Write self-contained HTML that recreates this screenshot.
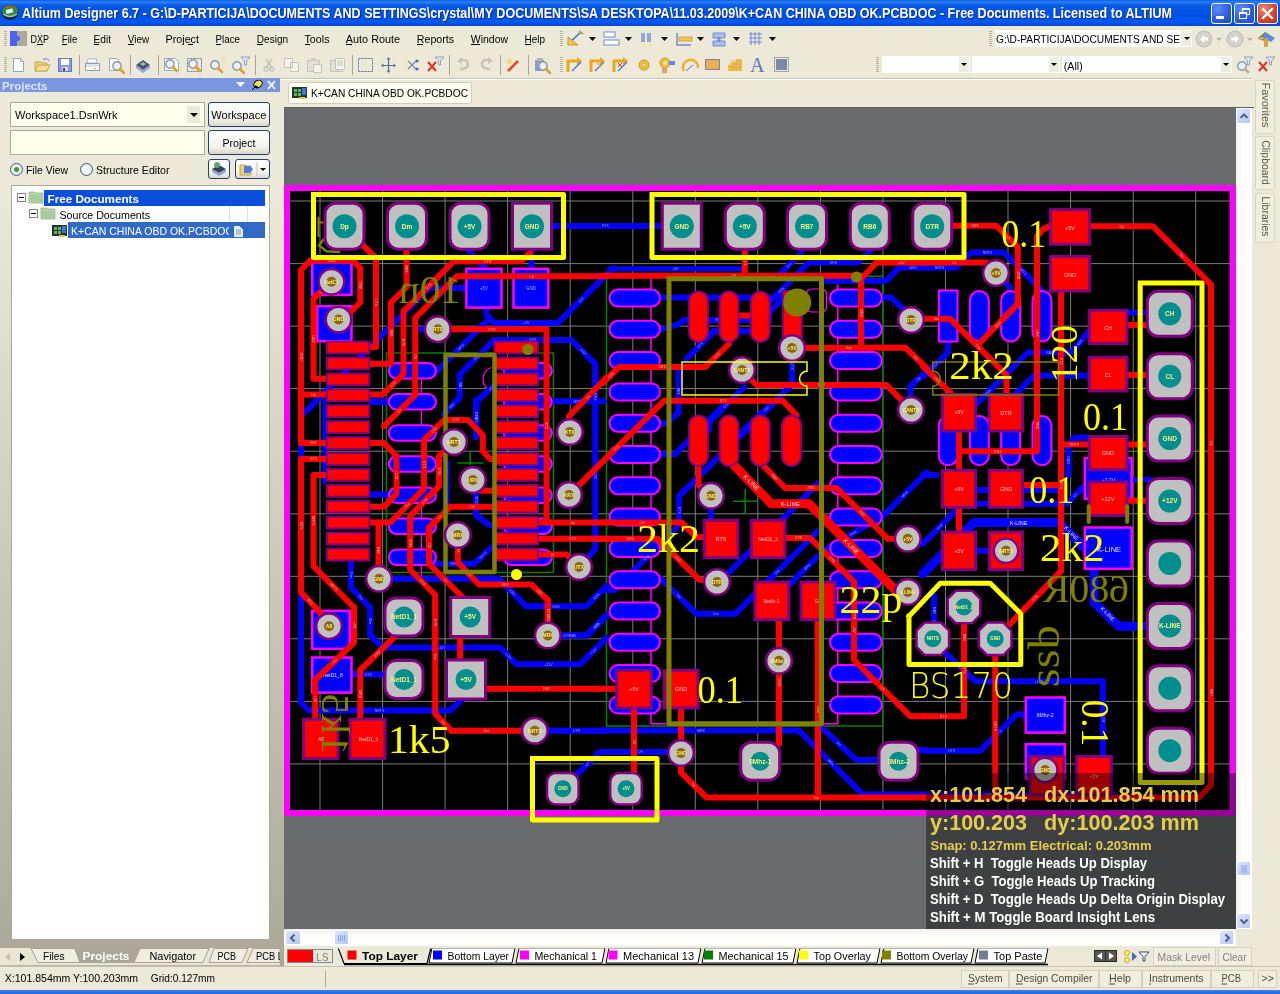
<!DOCTYPE html>
<html lang="en">
<head>
<meta charset="utf-8">
<title>Altium Designer 6.7</title>
<style>
*{box-sizing:border-box;margin:0;padding:0}
html,body{width:1280px;height:994px;overflow:hidden;background:#ECE9D8}
body{font-family:"Liberation Sans","DejaVu Sans",sans-serif;font-size:12px;color:#000;position:relative;-webkit-font-smoothing:none}
.abs{position:absolute}
#title{left:0;top:0;width:1280px;height:26px;background:linear-gradient(#0A5FE0 0,#2B80F8 2px,#0B5CE8 5px,#0355E4 9px,#0150E6 16px,#0259F3 22px,#0144D0 26px)}
#title .txt{left:22px;top:4px;color:#fff;font-weight:bold;font-size:13.5px;white-space:nowrap;letter-spacing:.42px;text-shadow:1px 1px 0 #0A246A}
.wbtn{top:3px;width:21px;height:21px;border:1px solid #fff;border-radius:3px;background:radial-gradient(circle at 30% 25%,#5C8CF5,#2A5BDD 60%,#1E49C8)}
.wbtn.close{background:radial-gradient(circle at 30% 25%,#E9886E,#D1432A 60%,#B8301A)}
#menubar{left:0;top:26px;width:1280px;height:26px;background:#ECE9D8}
.mi{top:33px;font-size:11.5px;white-space:nowrap;line-height:13px}
.mi u{text-decoration:underline;text-underline-offset:1px}
#toolbar{left:0;top:52px;width:1280px;height:26px;background:#ECE9D8}
.grip{width:3px;height:16px;background:repeating-linear-gradient(#B6B29E 0,#B6B29E 1px,transparent 1px,transparent 2px)}
.sep{width:1px;height:20px;background:#A9A592;top:55px}
.arrow{width:0;height:0;border-left:3px solid transparent;border-right:3px solid transparent;border-top:3px solid #000}
.combo{background:#fff;height:17px;top:56px}
.combo .cb{position:absolute;right:1px;top:1px;width:10px;height:15px;background:#EEECE0}
.combo .cb:after{content:"";position:absolute;left:2px;top:6px;border-left:3px solid transparent;border-right:3px solid transparent;border-top:3px solid #000}
#phead{left:0;top:78px;width:280px;height:14px;background:#7A96DF}
#phead .t{left:2px;top:0;font-weight:bold;font-size:11.5px;color:#DDE4F8;line-height:14px;letter-spacing:.3px}
.xpbtn{border:1px solid #1D3F7B;border-radius:3px;background:linear-gradient(#fff,#F3F2EA 70%,#DAD6C8);font-size:11.5px;text-align:center}
.inp{border:1px solid #ABA899;background:#FFFFEE}
#tree{left:11px;top:185px;width:259px;height:755px;background:#fff;border:1px solid #ABA899;border-width:1px 1px 1px 1px}
#work{left:284px;top:108px;width:952px;height:821px;background:#6A6B6E;overflow:hidden}
.sb{background:linear-gradient(90deg,#F3F1EC,#FDFDFB 40%,#FFFFFF)}
.sbb{width:16px;height:16px;border:1px solid #fff;border-radius:2px;background:linear-gradient(135deg,#DCE6FC,#B4C8F6);box-shadow:0 0 0 0 #000}
.sbh{background:linear-gradient(#F3F1EC,#FDFDFB 40%,#FFFFFF)}
.vtab{left:1255px;width:20px;border:1px solid #D8D5C4;background:#F1EEE0;border-radius:2px}
.vtab span{position:absolute;left:50%;top:50%;transform:translate(-50%,-50%) rotate(90deg);white-space:nowrap;font-size:11.5px;color:#5A5849}
.ltab{top:947px;height:19px;font-size:11.5px;line-height:18px;white-space:nowrap}
.sq{position:absolute;width:10px;height:10px;border:1px solid #000;top:3px}
.stb{top:970px;height:18px;border:1px solid #D4D0C0;background:#F1EEE0;font-size:11.5px;text-align:center;line-height:16px;color:#4A4A3A}
</style>
</head>
<body>
<!-- ===== Title bar ===== -->
<div id="title" class="abs">
  <svg class="abs" style="left:1px;top:3px" width="18" height="18" viewBox="0 0 18 18"><ellipse cx="9" cy="9.5" rx="8.5" ry="7.5" fill="#1B2A28"/><ellipse cx="9" cy="8" rx="8" ry="6" fill="#2F8A3A"/><path d="M2 6 Q9 0 16 6 Q9 3 2 6Z" fill="#D9432A"/><rect x="5" y="6" width="7" height="4" fill="#E8F0E0" transform="rotate(-15 9 8)"/><path d="M2 11 Q9 16 16 11" stroke="#9FC8F0" stroke-width="1.5" fill="none"/></svg>
  <div class="abs wbtn" style="left:1211px"><div class="abs" style="left:4px;top:12px;width:8px;height:3px;background:#fff"></div></div>
  <div class="abs wbtn" style="left:1234px"><div class="abs" style="left:7px;top:4px;width:8px;height:7px;border:1px solid #fff;border-top-width:2px"></div><div class="abs" style="left:4px;top:8px;width:8px;height:7px;border:1px solid #fff;border-top-width:2px;background:#2E60DE"></div></div>
  <div class="abs wbtn close" style="left:1257px"><svg width="19" height="19" viewBox="0 0 19 19"><path d="M5 5L14 14M14 5L5 14" stroke="#fff" stroke-width="2.2" stroke-linecap="square"/></svg></div>
</div>

<!-- ===== Menu bar ===== -->
<div id="menubar" class="abs"></div>
<div class="abs grip" style="left:4px;top:31px"></div>
<div class="abs" style="left:10px;top:31px;width:7px;height:15px;background:#4A62F0"></div>
<div class="abs" style="left:17px;top:31px;width:10px;height:15px;background:#ABA89A"></div>
<div class="abs" style="left:15px;top:36px;width:5px;height:5px;border-radius:3px;background:#4A62F0"></div>
<div class="abs grip" style="left:560px;top:31px"></div>
<!-- menu-row tool icons -->
<svg class="abs" style="left:566px;top:29px" width="210" height="20" viewBox="0 0 210 20">
  <path d="M2 15L15 3" stroke="#3A6CD0" stroke-width="1.6"/><path d="M2 8L2 16L12 16Z" fill="#F4C84E" stroke="#B08A20" stroke-width=".8"/><path d="M13 2L17 5" stroke="#C9A040" stroke-width="2"/>
  <path d="M23 8h7l-3.5 4z" fill="#000"/>
  <rect x="38" y="3" width="11" height="5" fill="#fff" stroke="#6C8CD8"/><rect x="38" y="11" width="15" height="5" fill="#fff" stroke="#6C8CD8"/>
  <path d="M59 8h7l-3.5 4z" fill="#000"/>
  <path d="M75 4h4v9h-4zM81 4h4v9h-4z" fill="#8FA6DD"/><path d="M76 16l2-2 2 2-2 2zM82 16l2-2 2 2-2 2z" fill="#F6E3A0"/>
  <path d="M95 8h7l-3.5 4z" fill="#000"/>
  <path d="M111 4v12h14" stroke="#6C8CD8" stroke-width="1.5" fill="none"/><rect x="113" y="8" width="13" height="4" fill="#F4C84E" stroke="#B08A20" stroke-width=".6"/>
  <path d="M131 8h7l-3.5 4z" fill="#000"/>
  <path d="M147 4h12v5h-7v3h7v5h-12v-5h7V9h-7z" fill="#A9C0F0" stroke="#5C7CC8" stroke-width=".8"/>
  <path d="M167 8h7l-3.5 4z" fill="#000"/>
  <path d="M183 5h13M183 9h13M183 13h13M185 3v13M189 3v13M193 3v13" stroke="#6C8CD8" stroke-width="1"/>
  <path d="M203 8h7l-3.5 4z" fill="#000"/>
</svg>
<div class="abs grip" style="left:989px;top:31px"></div>
<div class="abs" style="left:995px;top:30px;width:197px;height:17px;background:#fff"></div>
<div class="abs" style="left:1181px;top:31px;width:10px;height:15px;background:#EEECE0"></div>
<div class="abs arrow" style="left:1184px;top:37px"></div>
<svg class="abs" style="left:1194px;top:29px" width="86" height="20" viewBox="0 0 86 20">
  <circle cx="10" cy="10" r="8" fill="#D4D2CA" stroke="#BEBCB2"/><path d="M6 10l4-4v2.5h4v3h-4V14z" fill="#fff"/>
  <path d="M22 9h6l-3 3z" fill="#B8B6AC"/>
  <circle cx="41" cy="10" r="8" fill="#D4D2CA" stroke="#BEBCB2"/><path d="M45 10l-4-4v2.5h-4v3h4V14z" fill="#fff"/>
  <path d="M53 9h6l-3 3z" fill="#B8B6AC"/>
  <path d="M63 10l8-7 5 3z" fill="#7A8A3A"/><path d="M71 3l10 6-4 4-8-4z" fill="#5A8CE0"/><rect x="70" y="9" width="4" height="9" fill="#D9A441"/><path d="M64 10l6 2 1-3z" fill="#C08A30"/>
</svg>
<!-- ===== Toolbar ===== -->
<div id="toolbar" class="abs"></div>
<div class="abs grip" style="left:4px;top:57px"></div>
<div class="abs sep" style="left:79px"></div><div class="abs sep" style="left:130px"></div><div class="abs sep" style="left:158px"></div>
<div class="abs sep" style="left:255px"></div><div class="abs sep" style="left:352px"></div><div class="abs sep" style="left:449px"></div>
<div class="abs sep" style="left:500px"></div><div class="abs sep" style="left:528px"></div>
<div class="abs grip" style="left:560px;top:57px"></div>
<svg class="abs" style="left:0;top:52px" width="800" height="26" viewBox="0 0 800 26">
 <!-- new -->
 <path d="M13.5 6.500h7l3 3v10h-10z" fill="#fff" stroke="#8FA0C0"/><path d="M20.500 6.500v3h3" fill="#DCE4F0" stroke="#8FA0C0" stroke-width=".8"/>
 <!-- open -->
 <path d="M35 10h6l1 1h5v8H35z" fill="#E9D28A" stroke="#B89A40" stroke-width=".8"/><path d="M35 19l3-6h12l-3 6z" fill="#F6DE8C" stroke="#B89A40" stroke-width=".8"/><path d="M43 8q4-3 6 1" stroke="#7C9CD8" fill="none" stroke-width="1.2"/>
 <!-- save -->
 <rect x="58.500" y="6.500" width="13" height="13" fill="#8C9CE0" stroke="#6478C0"/><rect x="61" y="7" width="8" height="6" fill="#fff"/><rect x="62" y="15" width="6" height="4" fill="#D8DCF0"/><rect x="63" y="16" width="2" height="3" fill="#445"/>
 <!-- print -->
 <path d="M88 7h9l-1 4h-9z" fill="#fff" stroke="#9AA8C0" stroke-width=".8"/><path d="M85.500 11.500h14v7h-14z" fill="#DCE4F2" stroke="#8C9CB8"/><rect x="86" y="15" width="13" height="3" fill="#fff"/><rect x="94" y="16" width="2" height="1" fill="#E0A030"/>
 <!-- preview -->
 <path d="M109.500 6.500h7l3 3v9h-10z" fill="#fff" stroke="#9AA8C0"/><g transform="translate(117 14)"><circle cx="0" cy="0" r="4.2" fill="#E8F0FA" stroke="#8C98A8" stroke-width="1.4"/><path d="M3 3l4 4" stroke="#E0A030" stroke-width="2.6" stroke-linecap="round"/></g>
 <!-- layers chip -->
 <path d="M136 13l7-5 7 5-7 5z" fill="#485468"/><path d="M136 13v3l7 5 7-5v-3l-7 5z" fill="#8CA4D8"/><path d="M140 12l3-2 3 2-3 2z" fill="#A8B4C8"/>
 <!-- zoom doc -->
 <path d="M164.500 6.500h11l3 3v9h-14z" fill="#fff" stroke="#9AA8C0"/><g transform="translate(170 12)"><circle cx="0" cy="0" r="4.2" fill="#E8F0FA" stroke="#8C98A8" stroke-width="1.4"/><path d="M3 3l4 4" stroke="#E0A030" stroke-width="2.6" stroke-linecap="round"/></g>
 <!-- zoom area -->
 <rect x="187.500" y="6.500" width="14" height="13" fill="none" stroke="#6C7890" stroke-dasharray="2 1"/><g transform="translate(193 12)"><circle cx="0" cy="0" r="4.2" fill="#E8F0FA" stroke="#8C98A8" stroke-width="1.4"/><path d="M3 3l4 4" stroke="#E0A030" stroke-width="2.6" stroke-linecap="round"/></g>
 <!-- zoom selected -->
 <g transform="translate(215 13)"><circle cx="0" cy="0" r="4.2" fill="#E8F0FA" stroke="#8C98A8" stroke-width="1.4"/><path d="M3 3l4 4" stroke="#E0A030" stroke-width="2.6" stroke-linecap="round"/></g><path d="M224 5l2 2-2 2-2-2zM224 11l2 2-2 2-2-2z" fill="#FFF6D0" stroke="#E8C860" stroke-width=".6"/>
 <!-- zoom filter -->
 <g transform="translate(237 14)"><circle cx="0" cy="0" r="4.2" fill="#E8F0FA" stroke="#8C98A8" stroke-width="1.4"/><path d="M3 3l4 4" stroke="#E0A030" stroke-width="2.6" stroke-linecap="round"/></g><g transform="translate(241 5)"><path d="M0 0h9l-3.5 4v4h-2v-4z" fill="#DDE8F6" stroke="#7C90B0" stroke-width=".8"/></g>
 <!-- cut/copy/paste (disabled) -->
 <path d="M266 7l6 9M272 7l-6 9" stroke="#C6C4B8" stroke-width="1.6"/><circle cx="266" cy="17" r="2" fill="none" stroke="#C6C4B8" stroke-width="1.4"/><circle cx="272" cy="17" r="2" fill="none" stroke="#C6C4B8" stroke-width="1.4"/>
 <path d="M284.500 6.500h8v9h-8zM290.500 10.500h8v9h-8z" fill="#F4F3EC" stroke="#C6C4B8"/>
 <path d="M307.500 8.500h12v11h-12z" fill="#E2E0D6" stroke="#C6C4B8"/><path d="M313.500 12.500h8v8h-8z" fill="#F4F3EC" stroke="#C6C4B8"/><rect x="311" y="6" width="5" height="3" fill="#D0CEC2"/>
 <path d="M330.500 8.500h12v11h-12z" fill="#E2E0D6" stroke="#C6C4B8"/><path d="M335.500 6.500h9v11h-9z" fill="#F4F3EC" stroke="#C6C4B8"/><path d="M337 9h6M337 11h6M337 13h6" stroke="#C6C4B8"/>
 <!-- select rect -->
 <rect x="358.500" y="6.500" width="14" height="13" fill="none" stroke="#5C6CA8" stroke-dasharray="2 1"/>
 <!-- move -->
 <path d="M388.500 6v14M382 13.500h13" stroke="#5C6C98" stroke-width="1.2"/><path d="M388.500 5l2 2.500h-4zM388.500 21l2-2.500h-4zM381 13.500l2.500-2v4zM396 13.500l-2.500-2v4z" fill="#5C6C98"/>
 <!-- deselect -->
 <path d="M408 9l8 8M416 9l-8 8" stroke="#7C8CB0" stroke-width="1.2"/><circle cx="417" cy="9" r="1.600" fill="#5C6CA8"/><circle cx="417" cy="17" r="1.600" fill="#5C6CA8"/><path d="M406 7l2 2-2 2-2-2zM406 15l2 2-2 2-2-2z" fill="#FFF6D0" stroke="#E8C860" stroke-width=".6"/>
 <!-- x filter -->
 <path d="M428 10l8 9M436 10l-8 9" stroke="#E03020" stroke-width="2"/><g transform="translate(435 5)"><path d="M0 0h9l-3.5 4v4h-2v-4z" fill="#DDE8F6" stroke="#7C90B0" stroke-width=".8"/></g>
 <!-- undo redo -->
 <path d="M460 17q8 0 8-5t-8-4" stroke="#C6C4B8" stroke-width="2.4" fill="none"/><path d="M457 9l5-4v7z" fill="#C6C4B8"/>
 <path d="M490 17q-8 0-8-5t8-4" stroke="#C6C4B8" stroke-width="2.400" fill="none"/><path d="M493 9l-5-4v7z" fill="#C6C4B8"/>
 <!-- wand -->
 <path d="M508 19l10-10" stroke="#E04830" stroke-width="2.6"/><path d="M509 6l1.500 2 2-1-1 2 2 1.500-2.500.5-.5 2.500-1.500-2-2 1 1-2-2-1.500 2.500-.5z" fill="#F4D870"/>
 <!-- find -->
 <rect x="535" y="8" width="9" height="11" fill="#8C9CD0"/><rect x="537" y="6" width="6" height="3" fill="#B8B4A4"/><g transform="translate(543 14)"><circle cx="0" cy="0" r="4.2" fill="#E8F0FA" stroke="#8C98A8" stroke-width="1.4"/><path d="M3 3l4 4" stroke="#E0A030" stroke-width="2.6" stroke-linecap="round"/></g>
 <!-- routing tools -->
 <g transform="translate(567 4)"><path d="M1 16V5h9" stroke="#E8A820" stroke-width="3" fill="none"/><path d="M10 1l5 4-5 4z" fill="#E8A820"/></g><path d="M572 19l9-9" stroke="#4C7CD8" stroke-width="1.5"/>
 <g transform="translate(590 4)"><path d="M1 16V5h9" stroke="#E8A820" stroke-width="3" fill="none"/><path d="M10 1l5 4-5 4z" fill="#E8A820"/></g><path d="M595 19l9-9" stroke="#4C7CD8" stroke-width="1.500"/><path d="M596 12h4v4" stroke="#E8A820" fill="none"/>
 <g transform="translate(613 4)"><path d="M1 16V5h9" stroke="#E8A820" stroke-width="3" fill="none"/><path d="M10 1l5 4-5 4z" fill="#E8A820"/></g><path d="M618 19l9-9" stroke="#4C7CD8" stroke-width="1.500"/><path d="M618 11l4 4M622 11l-4 4" stroke="#E04830"/>
 <circle cx="644" cy="13" r="5" fill="#F0C030" stroke="#C89820"/><circle cx="644" cy="13" r="1.800" fill="#ECE9D8" stroke="#C89820" stroke-width=".6"/>
 <circle cx="665" cy="11" r="5" fill="#F0C030" stroke="#C89820"/><circle cx="665" cy="11" r="1.800" fill="#ECE9D8"/><rect x="662" y="15" width="5" height="6" fill="#E8A060"/><rect x="669" y="9" width="6" height="4" fill="#5C8CE0"/>
 <path d="M684 19a7.500 7.500 0 1 1 14-3" stroke="#F0B030" stroke-width="2.400" fill="none"/><path d="M686 19l7-6" stroke="#4C7CD8"/>
 <rect x="705.500" y="7.500" width="14" height="10" fill="#E8B050" stroke="#8C7CA0"/>
 <path d="M728 19v-6h4v-3h4v-3h6v12z" fill="#F0C040"/><path d="M729 15h13M729 12h13M733 9h9M732 8v11M736 8v11M740 8v11" stroke="#D8A060" stroke-width=".6"/>
 <text x="750" y="20" font-family="Liberation Serif,serif" font-size="20" fill="#5C78B8">A</text>
 <rect x="776" y="7" width="11" height="11" fill="#7C88A8"/><rect x="774.500" y="5.500" width="14" height="14" fill="none" stroke="#4C5C80" stroke-dasharray="1 1"/>
</svg>
<div class="abs grip" style="left:876px;top:57px"></div>
<div class="abs combo" style="left:882px;width:88px"><div class="cb"></div></div>
<div class="abs combo" style="left:972px;width:88px"><div class="cb"></div></div>
<div class="abs combo" style="left:1062px;width:170px"><div class="cb"></div></div>
<svg class="abs" style="left:1234px;top:52px" width="46" height="26" viewBox="0 0 46 26">
  <circle cx="8" cy="14" r="4.200" fill="#E8F0FA" stroke="#8C98A8" stroke-width="1.400"/><path d="M11 17l3 3" stroke="#B0A890" stroke-width="2.400" stroke-linecap="round"/><path d="M10 5h9l-3.500 4v4h-2v-4z" fill="#DDE8F6" stroke="#7C90B0" stroke-width=".8"/>
  <path d="M25 10l8 9M33 10l-8 9" stroke="#E03020" stroke-width="2"/><path d="M32 5h9l-3.500 4v4h-2v-4z" fill="#DDE8F6" stroke="#7C90B0" stroke-width=".8"/>
</svg>
<div class="abs" style="left:0;top:78px;width:1252px;height:1px;background:#C5C2B2"></div>
<div class="abs" style="left:0;top:79px;width:1252px;height:1px;background:#fff"></div>
<!-- ===== Left panel ===== -->
<div class="abs" style="left:0;top:92px;width:284px;height:874px;background:linear-gradient(#ECE9D8 0,#ECE9D8 12%,#ACA899 100%)"></div>
<div id="phead" class="abs">
  <svg class="abs" style="left:234px;top:0" width="46" height="14" viewBox="0 0 46 14"><path d="M2 4h9l-4.500 5z" fill="#fff"/><path d="M18 12l3-3" stroke="#000" stroke-width="1"/><ellipse cx="24" cy="6" rx="4.500" ry="3.500" fill="#F4E060" stroke="#000" transform="rotate(-35 24 6)"/><path d="M21 8l3 2" stroke="#000" stroke-width="2"/><path d="M34 3l7 8M41 3l-7 8" stroke="#fff" stroke-width="1.800"/></svg>
</div>
<div class="abs inp" style="left:10px;top:102px;width:195px;height:25px"></div>
<div class="abs" style="left:187px;top:106px;width:13px;height:17px;background:#ECE9D8"></div>
<div class="abs arrow" style="left:190px;top:113px;border-left-width:4px;border-right-width:4px;border-top-width:4px"></div>
<div class="abs xpbtn" style="left:208px;top:102px;width:62px;height:25px;line-height:22px"></div>
<div class="abs inp" style="left:10px;top:130px;width:195px;height:25px"></div>
<div class="abs xpbtn" style="left:208px;top:130px;width:62px;height:25px;line-height:22px"></div>
<div class="abs" style="left:10px;top:163px;width:13px;height:13px;border:1px solid #3A5A8A;border-radius:7px;background:radial-gradient(#fff,#E4E2D8)"></div>
<div class="abs" style="left:14px;top:167px;width:5px;height:5px;border-radius:3px;background:#2EA52E"></div>
<div class="abs" style="left:80px;top:163px;width:13px;height:13px;border:1px solid #3A5A8A;border-radius:7px;background:radial-gradient(#fff,#E4E2D8)"></div>
<div class="abs xpbtn" style="left:208px;top:159px;width:22px;height:20px"><svg width="20" height="18" viewBox="0 0 20 18"><path d="M3 9l7-4 7 4-7 4z" fill="#384050"/><path d="M3 9v3l7 4 7-4V9l-7 4z" fill="#8CA4D8"/><circle cx="8" cy="5" r="3" fill="#5CA870"/></svg></div>
<div class="abs xpbtn" style="left:235px;top:159px;width:35px;height:20px"><svg width="33" height="18" viewBox="0 0 33 18"><path d="M4 5h5l1 1h5v9H4z" fill="#F0D070" stroke="#B89A40" stroke-width=".8"/><path d="M8 6h6l3 3-3 4H8z" fill="#4C7CE0"/><path d="M21 2v14" stroke="#C8C4B4"/><path d="M24 8h6l-3 3z" fill="#000"/></svg></div>
<div id="tree" class="abs"></div>
<!-- tree rows -->
<div class="abs" style="left:44px;top:190px;width:221px;height:16px;background:#0A4FDC"></div>
<div class="abs" style="left:229px;top:206px;width:1px;height:16px;background:#E0E0E0"></div><div class="abs" style="left:247px;top:206px;width:1px;height:16px;background:#E0E0E0"></div>
<div class="abs" style="left:68px;top:222px;width:197px;height:16px;background:#316AC5"></div>
<svg class="abs" style="left:12px;top:186px" width="256" height="54" viewBox="0 0 256 54">
  <rect x="5.500" y="7.500" width="8" height="8" fill="#fff" stroke="#848484"/><path d="M7 11.500h5" stroke="#000"/>
  <path d="M17 6h5l1 1h8v10H17z" fill="#B8D8A8" stroke="#8CA884" stroke-width=".8"/><path d="M17 9h14v8H17z" fill="#A8CC9C"/>
  <rect x="17.500" y="23.500" width="8" height="8" fill="#fff" stroke="#848484"/><path d="M19 27.500h5" stroke="#000"/>
  <path d="M29 22h5l1 1h8v10H29z" fill="#B8D8A8" stroke="#8CA884" stroke-width=".8"/><path d="M29 25h14v8H29z" fill="#A8CC9C"/>
  <rect x="40" y="39" width="15" height="11" fill="#203828"/><path d="M42 41h3v3h-3zM46 41h3v3h-3zM42 45h3v3h-3zM46 45h3v3h-3z" fill="#58B868"/><rect x="50" y="40" width="4" height="7" fill="#3C78D0"/><rect x="47" y="49" width="6" height="2" fill="#E8C840"/>
  <path d="M222.500 40.500h5l3 3v7h-8z" fill="#E8EEF8" stroke="#fff" stroke-width=".8"/><path d="M224 44h5M224 46h5M224 48h5" stroke="#6C84B0" stroke-width=".8"/>
</svg>
<!-- panel bottom tabs -->
<svg class="abs" style="left:0;top:946px" width="284" height="20" viewBox="0 0 284 20">
  <rect x="0" y="2" width="280" height="18" fill="#E9E6D5"/>
  <path d="M10 7l-5 4 5 4z" fill="#C4C0B0"/><path d="M20 7l5 4-5 4z" fill="#000"/>
  <path d="M31 2.500h44l5 14h-42z" fill="#EFEDE0" stroke="#A5A28F" stroke-width="1"/>
  <path d="M140 2.500h69l-6 14h-69z" fill="#EFEDE0" stroke="#A5A28F" stroke-width="1"/>
  <path d="M214 2.500h34l-6 14h-33z" fill="#EFEDE0" stroke="#A5A28F" stroke-width="1"/>
  <path d="M253 2.500h27v14h-33z" fill="#EFEDE0" stroke="#A5A28F" stroke-width="1"/>
  <path d="M74 2h66l-6 15h-54z" fill="#ACA899"/>
  <path d="M0 19.500h284" stroke="#B8B5A2"/>
</svg>
<div class="abs" style="left:280px;top:80px;width:4px;height:886px;background:linear-gradient(#ECE9D8 0,#ECE9D8 12%,#ACA899 100%)"></div>

<!-- ===== Document tab ===== -->
<div class="abs" style="left:288px;top:82px;width:184px;height:22px;border:1px solid #D0CDB8;border-radius:3px;background:#FDFDF0"></div>
<svg class="abs" style="left:292px;top:86px" width="17" height="14" viewBox="0 0 17 14"><rect x="0" y="1" width="15" height="11" fill="#203828"/><path d="M2 3h3v3h-3zM6 3h3v3h-3zM2 7h3v3h-3zM6 7h3v3h-3z" fill="#58B868"/><rect x="10" y="2" width="4" height="7" fill="#3C78D0"/><rect x="7" y="11" width="6" height="2" fill="#E8C840"/></svg>
<div class="abs" style="left:284px;top:107px;width:970px;height:1px;background:#5C5D60"></div>
<svg class="abs" style="left:284px;top:108px;will-change:transform" width="952" height="821" viewBox="284 108 952 821" font-family="Liberation Sans,sans-serif">
<rect x="284" y="108" width="952" height="821" fill="#6A6B6E"/>
<g id="L-grid">
<rect x="287" y="188" width="945.5" height="625" fill="#000" stroke="#FF00FF" stroke-width="6" stroke-linejoin="round"/>
<path d="M320.0 190V810M382.6 190V810M445.1 190V810M507.6 190V810M570.2 190V810M632.8 190V810M695.3 190V810M757.8 190V810M820.4 190V810M882.9 190V810M945.5 190V810M1008.0 190V810M1070.6 190V810M1133.2 190V810M1195.7 190V810M290 201.0H1230M290 263.6H1230M290 326.1H1230M290 388.6H1230M290 451.2H1230M290 513.8H1230M290 576.3H1230M290 638.8H1230M290 701.4H1230M290 763.9H1230" stroke="#7C7C7C" stroke-width="1" fill="none"/>
</g>
<g id="L-mech">
<polyline points="386.5,353 553.5,353 553.5,572.5 386.5,572.5 386.5,353" fill="none" stroke="#008000" stroke-width="1.6" stroke-linecap="square" stroke-linejoin="round"/>
<polyline points="421.5,379.5 421.5,393.2" fill="none" stroke="#FF00FF" stroke-width="1.2" stroke-linecap="round" stroke-linejoin="round"/>
<polyline points="421.5,410.6 421.5,424.4" fill="none" stroke="#FF00FF" stroke-width="1.2" stroke-linecap="round" stroke-linejoin="round"/>
<polyline points="421.5,441.7 421.5,455.4" fill="none" stroke="#FF00FF" stroke-width="1.2" stroke-linecap="round" stroke-linejoin="round"/>
<polyline points="421.5,472.8 421.5,486.6" fill="none" stroke="#FF00FF" stroke-width="1.2" stroke-linecap="round" stroke-linejoin="round"/>
<polyline points="421.5,503.9 421.5,517.6" fill="none" stroke="#FF00FF" stroke-width="1.2" stroke-linecap="round" stroke-linejoin="round"/>
<polyline points="421.5,535 421.5,548.8" fill="none" stroke="#FF00FF" stroke-width="1.2" stroke-linecap="round" stroke-linejoin="round"/>
<polyline points="421.5,566.1 421.5,579.9" fill="none" stroke="#FF00FF" stroke-width="1.2" stroke-linecap="round" stroke-linejoin="round"/>
<path d="M491.5 367.5A10 12 0 0 0 491.5 391.2" fill="none" stroke="#FF00FF" stroke-width="1.2"/>
<polyline points="606.5,278.8 606.5,726 882.8,726" fill="none" stroke="#008000" stroke-width="1.6" stroke-linecap="round" stroke-linejoin="round"/>
<polyline points="864,276.2 882.8,276.2 882.8,726" fill="none" stroke="#008000" stroke-width="1.6" stroke-linecap="round" stroke-linejoin="round"/>
<polyline points="651,278.8 651,723.8 666.5,723.8" fill="none" stroke="#FF00FF" stroke-width="1.5" stroke-linecap="round" stroke-linejoin="round"/>
<polyline points="837.8,285 837.8,723.8 824,723.8" fill="none" stroke="#FF00FF" stroke-width="1.5" stroke-linecap="round" stroke-linejoin="round"/>
<rect x="806.5" y="289.0" width="20" height="23" rx="5" fill="none" stroke="#FF00FF" stroke-width="1.2"/>
<polyline points="457.8,463 482.8,463" fill="none" stroke="#008000" stroke-width="1.6" stroke-linecap="round" stroke-linejoin="round"/>
<polyline points="470.2,451.2 470.2,464.5" fill="none" stroke="#008000" stroke-width="1.6" stroke-linecap="round" stroke-linejoin="round"/>
<polyline points="733.5,501.2 757,501.2" fill="none" stroke="#008000" stroke-width="1.6" stroke-linecap="round" stroke-linejoin="round"/>
<polyline points="745.2,489.5 745.2,513.8" fill="none" stroke="#008000" stroke-width="1.6" stroke-linecap="round" stroke-linejoin="round"/>
</g>
<g id="L-blue">
<polyline points="469,251.2 484,266.2" fill="none" stroke="#0000FF" stroke-width="6" stroke-linecap="round" stroke-linejoin="round"/>
<polyline points="531.5,251.2 531.5,267.5" fill="none" stroke="#0000FF" stroke-width="6" stroke-linecap="round" stroke-linejoin="round"/>
<polyline points="551.5,226 659,226" fill="none" stroke="#0000FF" stroke-width="6" stroke-linecap="round" stroke-linejoin="round"/>
<polyline points="465.2,288 429,288 301,416.2 301,702.5" fill="none" stroke="#0000FF" stroke-width="6" stroke-linecap="round" stroke-linejoin="round"/>
<polyline points="486.5,308.8 486.5,315 494.5,323 557.8,323 604,277" fill="none" stroke="#0000FF" stroke-width="6" stroke-linecap="round" stroke-linejoin="round"/>
<polyline points="487.8,320 434,373.8" fill="none" stroke="#0000FF" stroke-width="6" stroke-linecap="round" stroke-linejoin="round"/>
<polyline points="421.5,329.2 431.5,329.2" fill="none" stroke="#0000FF" stroke-width="6" stroke-linecap="round" stroke-linejoin="round"/>
<polyline points="494,340 571.5,340 595.2,363.8 595.2,430" fill="none" stroke="#0000FF" stroke-width="6" stroke-linecap="round" stroke-linejoin="round"/>
<polyline points="494,340 459.8,374.5 459.8,397.5 444,413.8" fill="none" stroke="#0000FF" stroke-width="6" stroke-linecap="round" stroke-linejoin="round"/>
<polyline points="507.8,373.8 476.5,401.2 476.5,430" fill="none" stroke="#0000FF" stroke-width="6" stroke-linecap="round" stroke-linejoin="round"/>
<polyline points="552.8,401.2 604,401.2" fill="none" stroke="#0000FF" stroke-width="6" stroke-linecap="round" stroke-linejoin="round"/>
<polyline points="371.5,401.2 389,401.2" fill="none" stroke="#0000FF" stroke-width="6" stroke-linecap="round" stroke-linejoin="round"/>
<polyline points="609,268.8 741.5,268.8" fill="none" stroke="#0000FF" stroke-width="5" stroke-linecap="round" stroke-linejoin="round"/>
<polyline points="614,267.5 599,282.5" fill="none" stroke="#0000FF" stroke-width="5" stroke-linecap="round" stroke-linejoin="round"/>
<polyline points="801.5,252.5 776.5,277.5" fill="none" stroke="#0000FF" stroke-width="6" stroke-linecap="round" stroke-linejoin="round"/>
<polyline points="869.8,251.2 857.8,262.5 809,262.5 754,317.5" fill="none" stroke="#0000FF" stroke-width="6" stroke-linecap="round" stroke-linejoin="round"/>
<polyline points="661,297.5 784,297.5" fill="none" stroke="#0000FF" stroke-width="6" stroke-linecap="round" stroke-linejoin="round"/>
<polyline points="661,329.5 679,323.8 684,320 754,320" fill="none" stroke="#0000FF" stroke-width="6" stroke-linecap="round" stroke-linejoin="round"/>
<polyline points="714,331.2 754,331.2" fill="none" stroke="#0000FF" stroke-width="6" stroke-linecap="round" stroke-linejoin="round"/>
<polyline points="784,297.5 769,312.5 769,320" fill="none" stroke="#0000FF" stroke-width="6" stroke-linecap="round" stroke-linejoin="round"/>
<polyline points="792,352.5 792,380" fill="none" stroke="#0000FF" stroke-width="6" stroke-linecap="round" stroke-linejoin="round"/>
<polyline points="678.5,370 678.5,412.5 666.5,423.8 661,423.8" fill="none" stroke="#0000FF" stroke-width="6" stroke-linecap="round" stroke-linejoin="round"/>
<polyline points="744,387.5 709,422.5 709,430" fill="none" stroke="#0000FF" stroke-width="6" stroke-linecap="round" stroke-linejoin="round"/>
<polyline points="789,387.5 744,430" fill="none" stroke="#0000FF" stroke-width="6" stroke-linecap="round" stroke-linejoin="round"/>
<polyline points="882.8,297.5 891.5,297.5 904,310 911,320" fill="none" stroke="#0000FF" stroke-width="6" stroke-linecap="round" stroke-linejoin="round"/>
<polyline points="926.5,267.5 899,267.5 886.5,280.8 824,280.8" fill="none" stroke="#0000FF" stroke-width="6" stroke-linecap="round" stroke-linejoin="round"/>
<polyline points="926.5,371.2 910.2,386.2 910.2,400" fill="none" stroke="#0000FF" stroke-width="6" stroke-linecap="round" stroke-linejoin="round"/>
<polyline points="819,312.5 819,430" fill="none" stroke="#0000FF" stroke-width="1.5" stroke-linecap="round" stroke-linejoin="round"/>
<polyline points="714,331.2 686.5,358.8" fill="none" stroke="#0000FF" stroke-width="6" stroke-linecap="round" stroke-linejoin="round"/>
<polyline points="922.8,267.5 956.5,267.5 971,252.5 1004,252.5 1041.5,290" fill="none" stroke="#0000FF" stroke-width="6" stroke-linecap="round" stroke-linejoin="round"/>
<polyline points="996,273 1010.2,287.5" fill="none" stroke="#0000FF" stroke-width="6" stroke-linecap="round" stroke-linejoin="round"/>
<polyline points="1128.5,312.5 1146.5,312.5" fill="none" stroke="#0000FF" stroke-width="6" stroke-linecap="round" stroke-linejoin="round"/>
<polyline points="1087.8,332.5 1071.5,352.5 1027.8,352.5 949,431.2" fill="none" stroke="#0000FF" stroke-width="6" stroke-linecap="round" stroke-linejoin="round"/>
<polyline points="1087.8,375.5 1034,375.5 980.2,430" fill="none" stroke="#0000FF" stroke-width="6" stroke-linecap="round" stroke-linejoin="round"/>
<polyline points="947.8,342.5 947.8,352.5 924,376.2" fill="none" stroke="#0000FF" stroke-width="6" stroke-linecap="round" stroke-linejoin="round"/>
<polyline points="324.5,400 324.5,482.5" fill="none" stroke="#0000FF" stroke-width="4" stroke-linecap="round" stroke-linejoin="round"/>
<polyline points="370.2,494.5 389,494.5" fill="none" stroke="#0000FF" stroke-width="6" stroke-linecap="round" stroke-linejoin="round"/>
<polyline points="371.5,402 389,402" fill="none" stroke="#0000FF" stroke-width="6" stroke-linecap="round" stroke-linejoin="round"/>
<polyline points="351,562.5 351,587.5 370.2,607.5 370.2,635" fill="none" stroke="#0000FF" stroke-width="6" stroke-linecap="round" stroke-linejoin="round"/>
<polyline points="389,578.8 499,578.8 526,606.2 586.5,606.2 606.5,586.2" fill="none" stroke="#0000FF" stroke-width="6" stroke-linecap="round" stroke-linejoin="round"/>
<polyline points="476,400 476,437.5" fill="none" stroke="#0000FF" stroke-width="6" stroke-linecap="round" stroke-linejoin="round"/>
<polyline points="476,485 476,515 489,525 494,525" fill="none" stroke="#0000FF" stroke-width="6" stroke-linecap="round" stroke-linejoin="round"/>
<polyline points="491.5,547.5 474,563.8 436.5,563.8" fill="none" stroke="#0000FF" stroke-width="6" stroke-linecap="round" stroke-linejoin="round"/>
<polyline points="447.8,462.5 447.8,505" fill="none" stroke="#0000FF" stroke-width="4" stroke-linecap="round" stroke-linejoin="round"/>
<polyline points="595.2,400 595.2,548.8 587.8,557.5 579,567" fill="none" stroke="#0000FF" stroke-width="6" stroke-linecap="round" stroke-linejoin="round"/>
<polyline points="547.8,635.5 586.5,635 606.5,615" fill="none" stroke="#0000FF" stroke-width="6" stroke-linecap="round" stroke-linejoin="round"/>
<polyline points="724,405 675.2,454.2 661,454.2" fill="none" stroke="#0000FF" stroke-width="6" stroke-linecap="round" stroke-linejoin="round"/>
<polyline points="774,402.5 679,496.2 679,525 614,590 602.8,590" fill="none" stroke="#0000FF" stroke-width="6" stroke-linecap="round" stroke-linejoin="round"/>
<polyline points="711,505 711,518.8" fill="none" stroke="#0000FF" stroke-width="6" stroke-linecap="round" stroke-linejoin="round"/>
<polyline points="819,482.5 729,572.5 717,582" fill="none" stroke="#0000FF" stroke-width="6" stroke-linecap="round" stroke-linejoin="round"/>
<polyline points="926.5,472.5 882.8,516.2 824,550 790.2,583.8" fill="none" stroke="#0000FF" stroke-width="6" stroke-linecap="round" stroke-linejoin="round"/>
<polyline points="661,578.8 696.5,613.8 735.2,613.8 819,530" fill="none" stroke="#0000FF" stroke-width="6" stroke-linecap="round" stroke-linejoin="round"/>
<polyline points="922.8,475 936.5,475" fill="none" stroke="#0000FF" stroke-width="6" stroke-linecap="round" stroke-linejoin="round"/>
<polyline points="977,490 1059,490" fill="none" stroke="#0000FF" stroke-width="6" stroke-linecap="round" stroke-linejoin="round"/>
<polyline points="977,503.8 1066.5,503.8 1084,486.2" fill="none" stroke="#0000FF" stroke-width="6" stroke-linecap="round" stroke-linejoin="round"/>
<polyline points="1087.8,437.5 1075.2,437.5 1068.5,445 1068.5,475" fill="none" stroke="#0000FF" stroke-width="6" stroke-linecap="round" stroke-linejoin="round"/>
<polyline points="922.8,573.8 974,522.5 1059,522.5 1084,547.5" fill="none" stroke="#0000FF" stroke-width="9" stroke-linecap="round" stroke-linejoin="round"/>
<polyline points="1094,570 1094,602.5 1119,626.2 1146.5,626.2" fill="none" stroke="#0000FF" stroke-width="9" stroke-linecap="round" stroke-linejoin="round"/>
<polyline points="956.5,510 922.8,543.8" fill="none" stroke="#0000FF" stroke-width="6" stroke-linecap="round" stroke-linejoin="round"/>
<polyline points="977,550.8 987.8,550.8" fill="none" stroke="#0000FF" stroke-width="6" stroke-linecap="round" stroke-linejoin="round"/>
<polyline points="1132.8,479.5 1149,479.5" fill="none" stroke="#0000FF" stroke-width="6" stroke-linecap="round" stroke-linejoin="round"/>
<polyline points="934,595 934,650" fill="none" stroke="#0000FF" stroke-width="6" stroke-linecap="round" stroke-linejoin="round"/>
<text x="1018.5" y="525.2" font-size="5.5" fill="#E0E0FF" text-anchor="middle">K-LINE</text>
<text x="1071.5" y="535.2" font-size="5.5" fill="#E0E0FF" text-anchor="middle" transform="rotate(45 1071.5 533.2)">K-LINE</text>
<text x="1107.8" y="615.8" font-size="5.5" fill="#E0E0FF" text-anchor="middle" transform="rotate(45 1107.8 613.8)">K-LINE</text>
<polyline points="301,700 301,702.5 309,710.5 450.2,710.5 464,697.5" fill="none" stroke="#0000FF" stroke-width="6" stroke-linecap="round" stroke-linejoin="round"/>
<polyline points="370.2,635 382.8,647.5 500.2,647.5 516.5,664.2 580.2,664.2 606.5,638" fill="none" stroke="#0000FF" stroke-width="6" stroke-linecap="round" stroke-linejoin="round"/>
<polyline points="352.8,674.5 384,674.5" fill="none" stroke="#0000FF" stroke-width="6" stroke-linecap="round" stroke-linejoin="round"/>
<polyline points="559,635.8 586.5,635.8 606.5,616.2" fill="none" stroke="#0000FF" stroke-width="6" stroke-linecap="round" stroke-linejoin="round"/>
<polyline points="546.5,730.8 606.5,730.8" fill="none" stroke="#0000FF" stroke-width="6" stroke-linecap="round" stroke-linejoin="round"/>
<polyline points="575.2,776.2 599.5,752 681,752" fill="none" stroke="#0000FF" stroke-width="6" stroke-linecap="round" stroke-linejoin="round"/>
<polyline points="602.8,730.5 799,730.5 862.8,794.5 1114,794.5" fill="none" stroke="#0000FF" stroke-width="6" stroke-linecap="round" stroke-linejoin="round"/>
<polyline points="821.5,727.5 856.5,760 877.8,760" fill="none" stroke="#0000FF" stroke-width="6" stroke-linecap="round" stroke-linejoin="round"/>
<polyline points="919,750 926.5,750" fill="none" stroke="#0000FF" stroke-width="6" stroke-linecap="round" stroke-linejoin="round"/>
<polyline points="946.5,653.8 975.2,681.2 1102.8,681.2 1102.8,755" fill="none" stroke="#0000FF" stroke-width="6" stroke-linecap="round" stroke-linejoin="round"/>
<polyline points="922.8,750.8 980.2,750.8 1016.5,714.5 1024.5,714.5" fill="none" stroke="#0000FF" stroke-width="6" stroke-linecap="round" stroke-linejoin="round"/>
<polyline points="934,598.8 934,622.5" fill="none" stroke="#0000FF" stroke-width="6" stroke-linecap="round" stroke-linejoin="round"/>
</g>
<g id="L-bpad">
<rect x="312.2" y="262.4" width="39.3" height="32.5" fill="#0000FF" stroke="#FF00FF" stroke-width="2.5"/>
<rect x="317.2" y="306.2" width="34.3" height="35" fill="#0000FF" stroke="#FF00FF" stroke-width="2.5"/>
<rect x="466.4" y="268.8" width="35.1" height="38.8" fill="#0000FF" stroke="#FF00FF" stroke-width="2.5"/>
<rect x="513.5" y="268.8" width="34.8" height="38.8" fill="#0000FF" stroke="#FF00FF" stroke-width="2.5"/>
<text x="484" y="289.6" font-size="4.5" fill="#B0B0FF" text-anchor="middle">+5V</text>
<text x="531" y="289.6" font-size="4.5" fill="#B0B0FF" text-anchor="middle">GND</text>
<rect x="388.8" y="363" width="47.2" height="15.5" fill="#0000FF" stroke="#FF00FF" stroke-width="2" rx="7.8"/>
<rect x="503.8" y="363" width="48" height="15.5" fill="#0000FF" stroke="#FF00FF" stroke-width="2" rx="7.8"/>
<rect x="388.8" y="394.1" width="47.2" height="15.5" fill="#0000FF" stroke="#FF00FF" stroke-width="2" rx="7.8"/>
<rect x="503.8" y="394.1" width="48" height="15.5" fill="#0000FF" stroke="#FF00FF" stroke-width="2" rx="7.8"/>
<rect x="388.8" y="425.2" width="47.2" height="15.5" fill="#0000FF" stroke="#FF00FF" stroke-width="2" rx="7.8"/>
<rect x="503.8" y="425.2" width="48" height="15.5" fill="#0000FF" stroke="#FF00FF" stroke-width="2" rx="7.8"/>
<rect x="388.8" y="456.3" width="47.2" height="15.5" fill="#0000FF" stroke="#FF00FF" stroke-width="2" rx="7.8"/>
<rect x="503.8" y="456.3" width="48" height="15.5" fill="#0000FF" stroke="#FF00FF" stroke-width="2" rx="7.8"/>
<rect x="388.8" y="487.4" width="47.2" height="15.5" fill="#0000FF" stroke="#FF00FF" stroke-width="2" rx="7.8"/>
<rect x="503.8" y="487.4" width="48" height="15.5" fill="#0000FF" stroke="#FF00FF" stroke-width="2" rx="7.8"/>
<rect x="388.8" y="518.5" width="47.2" height="15.5" fill="#0000FF" stroke="#FF00FF" stroke-width="2" rx="7.8"/>
<rect x="503.8" y="518.5" width="48" height="15.5" fill="#0000FF" stroke="#FF00FF" stroke-width="2" rx="7.8"/>
<rect x="388.8" y="549.6" width="47.2" height="15.5" fill="#0000FF" stroke="#FF00FF" stroke-width="2" rx="7.8"/>
<rect x="503.8" y="549.6" width="48" height="15.5" fill="#0000FF" stroke="#FF00FF" stroke-width="2" rx="7.8"/>
<rect x="609.5" y="289.5" width="50.5" height="17" fill="#0000FF" stroke="#FF00FF" stroke-width="2" rx="8.5"/>
<rect x="830" y="289.5" width="51.8" height="17" fill="#0000FF" stroke="#FF00FF" stroke-width="2" rx="8.5"/>
<rect x="609.5" y="320.8" width="50.5" height="17" fill="#0000FF" stroke="#FF00FF" stroke-width="2" rx="8.5"/>
<rect x="830" y="320.8" width="51.8" height="17" fill="#0000FF" stroke="#FF00FF" stroke-width="2" rx="8.5"/>
<rect x="609.5" y="352.1" width="50.5" height="17" fill="#0000FF" stroke="#FF00FF" stroke-width="2" rx="8.5"/>
<rect x="830" y="352.1" width="51.8" height="17" fill="#0000FF" stroke="#FF00FF" stroke-width="2" rx="8.5"/>
<rect x="609.5" y="383.4" width="50.5" height="17" fill="#0000FF" stroke="#FF00FF" stroke-width="2" rx="8.5"/>
<rect x="830" y="383.4" width="51.8" height="17" fill="#0000FF" stroke="#FF00FF" stroke-width="2" rx="8.5"/>
<rect x="609.5" y="414.7" width="50.5" height="17" fill="#0000FF" stroke="#FF00FF" stroke-width="2" rx="8.5"/>
<rect x="830" y="414.7" width="51.8" height="17" fill="#0000FF" stroke="#FF00FF" stroke-width="2" rx="8.5"/>
<rect x="609.5" y="446" width="50.5" height="17" fill="#0000FF" stroke="#FF00FF" stroke-width="2" rx="8.5"/>
<rect x="830" y="446" width="51.8" height="17" fill="#0000FF" stroke="#FF00FF" stroke-width="2" rx="8.5"/>
<rect x="609.5" y="477.3" width="50.5" height="17" fill="#0000FF" stroke="#FF00FF" stroke-width="2" rx="8.5"/>
<rect x="830" y="477.3" width="51.8" height="17" fill="#0000FF" stroke="#FF00FF" stroke-width="2" rx="8.5"/>
<rect x="609.5" y="508.6" width="50.5" height="17" fill="#0000FF" stroke="#FF00FF" stroke-width="2" rx="8.5"/>
<rect x="830" y="508.6" width="51.8" height="17" fill="#0000FF" stroke="#FF00FF" stroke-width="2" rx="8.5"/>
<rect x="609.5" y="539.9" width="50.5" height="17" fill="#0000FF" stroke="#FF00FF" stroke-width="2" rx="8.5"/>
<rect x="830" y="539.9" width="51.8" height="17" fill="#0000FF" stroke="#FF00FF" stroke-width="2" rx="8.5"/>
<rect x="609.5" y="571.2" width="50.5" height="17" fill="#0000FF" stroke="#FF00FF" stroke-width="2" rx="8.5"/>
<rect x="830" y="571.2" width="51.8" height="17" fill="#0000FF" stroke="#FF00FF" stroke-width="2" rx="8.5"/>
<rect x="609.5" y="602.5" width="50.5" height="17" fill="#0000FF" stroke="#FF00FF" stroke-width="2" rx="8.5"/>
<rect x="830" y="602.5" width="51.8" height="17" fill="#0000FF" stroke="#FF00FF" stroke-width="2" rx="8.5"/>
<rect x="609.5" y="633.8" width="50.5" height="17" fill="#0000FF" stroke="#FF00FF" stroke-width="2" rx="8.5"/>
<rect x="830" y="633.8" width="51.8" height="17" fill="#0000FF" stroke="#FF00FF" stroke-width="2" rx="8.5"/>
<rect x="609.5" y="665.1" width="50.5" height="17" fill="#0000FF" stroke="#FF00FF" stroke-width="2" rx="8.5"/>
<rect x="830" y="665.1" width="51.8" height="17" fill="#0000FF" stroke="#FF00FF" stroke-width="2" rx="8.5"/>
<rect x="609.5" y="696.4" width="50.5" height="17" fill="#0000FF" stroke="#FF00FF" stroke-width="2" rx="8.5"/>
<rect x="830" y="696.4" width="51.8" height="17" fill="#0000FF" stroke="#FF00FF" stroke-width="2" rx="8.5"/>
<rect x="938.8" y="290.5" width="18.7" height="51" fill="#0000FF" stroke="#FF00FF" stroke-width="2"/>
<rect x="969.8" y="291" width="19" height="50.5" fill="#0000FF" stroke="#FF00FF" stroke-width="2" rx="9.5"/>
<rect x="1001.2" y="291" width="19" height="50.5" fill="#0000FF" stroke="#FF00FF" stroke-width="2" rx="9.5"/>
<rect x="1032.5" y="291" width="19" height="50.5" fill="#0000FF" stroke="#FF00FF" stroke-width="2" rx="9.5"/>
<rect x="312.2" y="610.8" width="37.5" height="38" fill="#0000FF" stroke="#FF00FF" stroke-width="2.5"/>
<rect x="938.8" y="416" width="18.7" height="49.2" fill="#0000FF" stroke="#FF00FF" stroke-width="2" rx="9"/>
<rect x="969.8" y="416" width="19" height="49.2" fill="#0000FF" stroke="#FF00FF" stroke-width="2" rx="9.5"/>
<rect x="1001.2" y="416" width="19" height="49.2" fill="#0000FF" stroke="#FF00FF" stroke-width="2" rx="9.5"/>
<rect x="1032.5" y="416" width="19" height="49.2" fill="#0000FF" stroke="#FF00FF" stroke-width="2" rx="9.5"/>
<rect x="1084.8" y="458.2" width="46.8" height="40.5" fill="#0000FF" stroke="#FF00FF" stroke-width="2.5"/>
<rect x="1084.8" y="527.5" width="46.8" height="41.3" fill="#0000FF" stroke="#FF00FF" stroke-width="2.5"/>
<text x="1108.5" y="481.7" font-size="6" fill="#C0C0FF" text-anchor="middle">+12V</text>
<text x="1109" y="551.7" font-size="7.5" fill="#E0E0FF" text-anchor="middle">K-LINE</text>
<rect x="312.2" y="657.5" width="39.3" height="35.1" fill="#0000FF" stroke="#FF00FF" stroke-width="2.5"/>
<text x="332.8" y="677.3" font-size="5" fill="#E0E0FF" text-anchor="middle">NetD1_8</text>
<rect x="1025.8" y="697.5" width="39" height="35.1" fill="#0000FF" stroke="#FF00FF" stroke-width="2.5"/>
<rect x="1025.8" y="744.2" width="39" height="34.5" fill="#0000FF" stroke="#FF00FF" stroke-width="2.5"/>
<text x="1045.2" y="717.3" font-size="5" fill="#E0E0FF" text-anchor="middle">8Mhz-2</text>
</g>
<g id="L-bluelbl">
<text x="605.2" y="227.3" font-size="3.6" fill="#A8A8FF" text-anchor="middle">KTX</text>
<text x="447.1" y="289.3" font-size="3.6" fill="#A8A8FF" text-anchor="middle">CL</text>
<text x="365" y="353.4" font-size="3.6" fill="#A8A8FF" text-anchor="middle" transform="rotate(-45 365 352.1)">CL</text>
<text x="301" y="560.6" font-size="3.6" fill="#A8A8FF" text-anchor="middle" transform="rotate(90 301 559.4)">CL</text>
<text x="526.1" y="324.3" font-size="3.6" fill="#A8A8FF" text-anchor="middle">+5V</text>
<text x="580.9" y="301.3" font-size="3.6" fill="#A8A8FF" text-anchor="middle" transform="rotate(-44.9 580.9 300)">+5V</text>
<text x="460.9" y="348.2" font-size="3.6" fill="#A8A8FF" text-anchor="middle" transform="rotate(-45 460.9 346.9)">MRX</text>
<text x="532.8" y="341.3" font-size="3.6" fill="#A8A8FF" text-anchor="middle">KRX</text>
<text x="583.4" y="353.2" font-size="3.6" fill="#A8A8FF" text-anchor="middle" transform="rotate(45.1 583.4 351.9)">KRX</text>
<text x="595.2" y="398.2" font-size="3.6" fill="#A8A8FF" text-anchor="middle" transform="rotate(90 595.2 396.9)">KRX</text>
<text x="476.9" y="358.6" font-size="3.6" fill="#A8A8FF" text-anchor="middle" transform="rotate(-45.3 476.9 357.2)">RB7</text>
<text x="459.8" y="387.3" font-size="3.6" fill="#A8A8FF" text-anchor="middle" transform="rotate(90 459.8 386)">RB7</text>
<text x="451.9" y="406.9" font-size="3.6" fill="#A8A8FF" text-anchor="middle" transform="rotate(-45.9 451.9 405.6)">RB7</text>
<text x="492.1" y="388.8" font-size="3.6" fill="#A8A8FF" text-anchor="middle" transform="rotate(-41.2 492.1 387.5)">RTS</text>
<text x="476.5" y="416.9" font-size="3.6" fill="#A8A8FF" text-anchor="middle" transform="rotate(90 476.5 415.6)">RTS</text>
<text x="578.4" y="402.5" font-size="3.6" fill="#A8A8FF" text-anchor="middle">NRTS</text>
<text x="675.2" y="270.1" font-size="3.6" fill="#A8A8FF" text-anchor="middle">+5V</text>
<text x="789" y="266.3" font-size="3.6" fill="#A8A8FF" text-anchor="middle" transform="rotate(-45 789 265)">Dm</text>
<text x="833.4" y="263.8" font-size="3.6" fill="#A8A8FF" text-anchor="middle">KRX</text>
<text x="781.5" y="291.3" font-size="3.6" fill="#A8A8FF" text-anchor="middle" transform="rotate(-45 781.5 290)">KRX</text>
<text x="722.5" y="298.8" font-size="3.6" fill="#A8A8FF" text-anchor="middle">RB7</text>
<text x="719" y="321.3" font-size="3.6" fill="#A8A8FF" text-anchor="middle">RTS</text>
<text x="734" y="332.5" font-size="3.6" fill="#A8A8FF" text-anchor="middle">NRTS</text>
<text x="792" y="367.6" font-size="3.6" fill="#A8A8FF" text-anchor="middle" transform="rotate(90 792 366.2)">UTX</text>
<text x="678.5" y="392.6" font-size="3.6" fill="#A8A8FF" text-anchor="middle" transform="rotate(90 678.5 391.2)">RB6</text>
<text x="726.5" y="406.3" font-size="3.6" fill="#A8A8FF" text-anchor="middle" transform="rotate(-45 726.5 405)">DTR</text>
<text x="766.5" y="410.1" font-size="3.6" fill="#A8A8FF" text-anchor="middle" transform="rotate(-43.4 766.5 408.8)">CH</text>
<text x="912.8" y="268.8" font-size="3.6" fill="#A8A8FF" text-anchor="middle">URX</text>
<text x="855.2" y="282.1" font-size="3.6" fill="#A8A8FF" text-anchor="middle">URX</text>
<text x="918.4" y="380" font-size="3.6" fill="#A8A8FF" text-anchor="middle" transform="rotate(-42.6 918.4 378.7)">Dp</text>
<text x="700.2" y="346.3" font-size="3.6" fill="#A8A8FF" text-anchor="middle" transform="rotate(-45.1 700.2 345)">KTX</text>
<text x="939.6" y="268.8" font-size="3.6" fill="#A8A8FF" text-anchor="middle">NRTS</text>
<text x="987.5" y="253.8" font-size="3.6" fill="#A8A8FF" text-anchor="middle">NRTS</text>
<text x="1022.8" y="272.6" font-size="3.6" fill="#A8A8FF" text-anchor="middle" transform="rotate(45 1022.8 271.2)">NRTS</text>
<text x="1079.7" y="343.8" font-size="3.6" fill="#A8A8FF" text-anchor="middle" transform="rotate(-50.8 1079.7 342.5)">RB6</text>
<text x="1049.7" y="353.8" font-size="3.6" fill="#A8A8FF" text-anchor="middle">RB6</text>
<text x="988.4" y="393.2" font-size="3.6" fill="#A8A8FF" text-anchor="middle" transform="rotate(-45 988.4 391.9)">RB6</text>
<text x="1060.9" y="376.8" font-size="3.6" fill="#A8A8FF" text-anchor="middle">DTR</text>
<text x="1007.1" y="404.1" font-size="3.6" fill="#A8A8FF" text-anchor="middle" transform="rotate(-45.4 1007.1 402.8)">DTR</text>
<text x="935.9" y="365.7" font-size="3.6" fill="#A8A8FF" text-anchor="middle" transform="rotate(-44.9 935.9 364.4)">CH</text>
<text x="351" y="576.3" font-size="3.6" fill="#A8A8FF" text-anchor="middle" transform="rotate(90 351 575)">Dm</text>
<text x="360.6" y="598.8" font-size="3.6" fill="#A8A8FF" text-anchor="middle" transform="rotate(46.2 360.6 597.5)">Dm</text>
<text x="370.2" y="622.5" font-size="3.6" fill="#A8A8FF" text-anchor="middle" transform="rotate(90 370.2 621.2)">Dm</text>
<text x="444" y="580.1" font-size="3.6" fill="#A8A8FF" text-anchor="middle">KRX</text>
<text x="512.5" y="593.8" font-size="3.6" fill="#A8A8FF" text-anchor="middle" transform="rotate(45.4 512.5 592.5)">KRX</text>
<text x="556.2" y="607.5" font-size="3.6" fill="#A8A8FF" text-anchor="middle">KRX</text>
<text x="596.5" y="597.5" font-size="3.6" fill="#A8A8FF" text-anchor="middle" transform="rotate(-45 596.5 596.2)">KRX</text>
<text x="476" y="420.1" font-size="3.6" fill="#A8A8FF" text-anchor="middle" transform="rotate(90 476 418.8)">RB7</text>
<text x="476" y="501.3" font-size="3.6" fill="#A8A8FF" text-anchor="middle" transform="rotate(90 476 500)">RTS</text>
<text x="482.8" y="556.9" font-size="3.6" fill="#A8A8FF" text-anchor="middle" transform="rotate(-43 482.8 555.6)">NRTS</text>
<text x="455.2" y="565.1" font-size="3.6" fill="#A8A8FF" text-anchor="middle">NRTS</text>
<text x="595.2" y="475.7" font-size="3.6" fill="#A8A8FF" text-anchor="middle" transform="rotate(90 595.2 474.4)">+12V</text>
<text x="567.1" y="636.5" font-size="3.6" fill="#A8A8FF" text-anchor="middle">UTX</text>
<text x="596.5" y="626.3" font-size="3.6" fill="#A8A8FF" text-anchor="middle" transform="rotate(-45 596.5 625)">UTX</text>
<text x="699.6" y="430.9" font-size="3.6" fill="#A8A8FF" text-anchor="middle" transform="rotate(-45.2 699.6 429.6)">Dp</text>
<text x="726.5" y="450.7" font-size="3.6" fill="#A8A8FF" text-anchor="middle" transform="rotate(-44.6 726.5 449.4)">KTX</text>
<text x="679" y="511.9" font-size="3.6" fill="#A8A8FF" text-anchor="middle" transform="rotate(90 679 510.6)">KTX</text>
<text x="646.5" y="558.8" font-size="3.6" fill="#A8A8FF" text-anchor="middle" transform="rotate(-45 646.5 557.5)">KTX</text>
<text x="774" y="528.8" font-size="3.6" fill="#A8A8FF" text-anchor="middle" transform="rotate(-45 774 527.5)">+5V</text>
<text x="904.6" y="495.7" font-size="3.6" fill="#A8A8FF" text-anchor="middle" transform="rotate(-45 904.6 494.4)">MRX</text>
<text x="853.4" y="534.4" font-size="3.6" fill="#A8A8FF" text-anchor="middle" transform="rotate(-29.9 853.4 533.1)">MRX</text>
<text x="807.1" y="568.2" font-size="3.6" fill="#A8A8FF" text-anchor="middle" transform="rotate(-45 807.1 566.9)">MRX</text>
<text x="678.8" y="597.6" font-size="3.6" fill="#A8A8FF" text-anchor="middle" transform="rotate(44.6 678.8 596.3)">Dm</text>
<text x="715.9" y="615.1" font-size="3.6" fill="#A8A8FF" text-anchor="middle">Dm</text>
<text x="777.1" y="573.2" font-size="3.6" fill="#A8A8FF" text-anchor="middle" transform="rotate(-45 777.1 571.9)">Dm</text>
<text x="1021.8" y="505.1" font-size="3.6" fill="#A8A8FF" text-anchor="middle">CH</text>
<text x="1075.2" y="496.3" font-size="3.6" fill="#A8A8FF" text-anchor="middle" transform="rotate(-45.2 1075.2 495)">CH</text>
<text x="1068.5" y="461.3" font-size="3.6" fill="#A8A8FF" text-anchor="middle" transform="rotate(90 1068.5 460)">GND</text>
<text x="939.6" y="528.2" font-size="3.6" fill="#A8A8FF" text-anchor="middle" transform="rotate(-45.1 939.6 526.9)">URX</text>
<text x="934" y="623.8" font-size="3.6" fill="#A8A8FF" text-anchor="middle" transform="rotate(90 934 622.5)">CL</text>
<text x="379.6" y="711.8" font-size="3.6" fill="#A8A8FF" text-anchor="middle">NRTS</text>
<text x="441.5" y="648.8" font-size="3.6" fill="#A8A8FF" text-anchor="middle">+12V</text>
<text x="508.4" y="657.1" font-size="3.6" fill="#A8A8FF" text-anchor="middle" transform="rotate(45.7 508.4 655.9)">+12V</text>
<text x="548.4" y="665.5" font-size="3.6" fill="#A8A8FF" text-anchor="middle">+12V</text>
<text x="593.4" y="652.4" font-size="3.6" fill="#A8A8FF" text-anchor="middle" transform="rotate(-44.9 593.4 651.1)">+12V</text>
<text x="368.4" y="675.8" font-size="3.6" fill="#A8A8FF" text-anchor="middle">UTX</text>
<text x="572.8" y="637.1" font-size="3.6" fill="#A8A8FF" text-anchor="middle">RB6</text>
<text x="596.5" y="627.3" font-size="3.6" fill="#A8A8FF" text-anchor="middle" transform="rotate(-44.4 596.5 626)">RB6</text>
<text x="576.5" y="732.1" font-size="3.6" fill="#A8A8FF" text-anchor="middle">DTR</text>
<text x="587.4" y="765.4" font-size="3.6" fill="#A8A8FF" text-anchor="middle" transform="rotate(-44.9 587.4 764.1)">CH</text>
<text x="640.2" y="753.3" font-size="3.6" fill="#A8A8FF" text-anchor="middle">CH</text>
<text x="700.9" y="731.8" font-size="3.6" fill="#A8A8FF" text-anchor="middle">MRX</text>
<text x="830.9" y="763.8" font-size="3.6" fill="#A8A8FF" text-anchor="middle" transform="rotate(45.1 830.9 762.5)">MRX</text>
<text x="988.4" y="795.8" font-size="3.6" fill="#A8A8FF" text-anchor="middle">MRX</text>
<text x="839" y="745" font-size="3.6" fill="#A8A8FF" text-anchor="middle" transform="rotate(42.9 839 743.8)">Dm</text>
<text x="960.9" y="668.8" font-size="3.6" fill="#A8A8FF" text-anchor="middle" transform="rotate(43.7 960.9 667.5)">+12V</text>
<text x="1039" y="682.5" font-size="3.6" fill="#A8A8FF" text-anchor="middle">+12V</text>
<text x="1102.8" y="719.4" font-size="3.6" fill="#A8A8FF" text-anchor="middle" transform="rotate(90 1102.8 718.1)">+12V</text>
<text x="951.5" y="752.1" font-size="3.6" fill="#A8A8FF" text-anchor="middle">UTX</text>
<text x="998.4" y="733.9" font-size="3.6" fill="#A8A8FF" text-anchor="middle" transform="rotate(-45 998.4 732.6)">UTX</text>
<text x="934" y="611.9" font-size="3.6" fill="#A8A8FF" text-anchor="middle" transform="rotate(90 934 610.6)">RB6</text>
</g>
<g id="L-red">
<polyline points="361.5,243.8 376,258 376,347 370.2,347" fill="none" stroke="#FF0000" stroke-width="6" stroke-linecap="round" stroke-linejoin="round"/>
<polyline points="406.5,251.2 406.5,287 391,302.5 391,363.8 370.2,363.8" fill="none" stroke="#FF0000" stroke-width="6" stroke-linecap="round" stroke-linejoin="round"/>
<polyline points="530.2,252.5 521.5,261.2 454,261.2 403.5,311.2 403.5,373.8 382.8,394.5 370.2,394.5" fill="none" stroke="#FF0000" stroke-width="6" stroke-linecap="round" stroke-linejoin="round"/>
<polyline points="606.5,276.2 457,276.2 415.2,318 415.2,395 384,426.2" fill="none" stroke="#FF0000" stroke-width="6" stroke-linecap="round" stroke-linejoin="round"/>
<polyline points="301,443 301,270 310.2,260.5 352.8,260.5 360.2,268 360.2,302.5 350.2,312.5 338.5,319.5" fill="none" stroke="#FF0000" stroke-width="6" stroke-linecap="round" stroke-linejoin="round"/>
<polyline points="331.5,281.8 313.5,298.8 313.5,378.8 326,378.8" fill="none" stroke="#FF0000" stroke-width="6" stroke-linecap="round" stroke-linejoin="round"/>
<polyline points="301,394.5 326,394.5" fill="none" stroke="#FF0000" stroke-width="6" stroke-linecap="round" stroke-linejoin="round"/>
<polyline points="437.8,329.2 546.5,329.2 546.5,522.5" fill="none" stroke="#FF0000" stroke-width="6" stroke-linecap="round" stroke-linejoin="round"/>
<polyline points="606.5,377.5 569,416.2 569,427.5" fill="none" stroke="#FF0000" stroke-width="6" stroke-linecap="round" stroke-linejoin="round"/>
<polyline points="744.8,251.2 744.8,275.8" fill="none" stroke="#FF0000" stroke-width="6" stroke-linecap="round" stroke-linejoin="round"/>
<polyline points="601.5,275.8 864,275.8 876.5,262.5 926.5,262.5" fill="none" stroke="#FF0000" stroke-width="6" stroke-linecap="round" stroke-linejoin="round"/>
<polyline points="861,278.8 861,347.5" fill="none" stroke="#FF0000" stroke-width="6" stroke-linecap="round" stroke-linejoin="round"/>
<polyline points="792,348 905.2,347.5 926.5,368" fill="none" stroke="#FF0000" stroke-width="6" stroke-linecap="round" stroke-linejoin="round"/>
<polyline points="602.8,383 619,367 705.2,367 729,343.8" fill="none" stroke="#FF0000" stroke-width="6" stroke-linecap="round" stroke-linejoin="round"/>
<polyline points="742,370 756.5,385 886.5,385 900.2,398.8 911,410" fill="none" stroke="#FF0000" stroke-width="6" stroke-linecap="round" stroke-linejoin="round"/>
<polyline points="569,495 664,400.8 782.8,400.8 796.5,415" fill="none" stroke="#FF0000" stroke-width="6" stroke-linecap="round" stroke-linejoin="round"/>
<polyline points="953.5,225.8 996.5,225.8 1017.8,247 1017.8,303.8 977.8,345" fill="none" stroke="#FF0000" stroke-width="6" stroke-linecap="round" stroke-linejoin="round"/>
<polyline points="1049,226.2 1042.8,229.5 1037,236.2 1037,430" fill="none" stroke="#FF0000" stroke-width="6" stroke-linecap="round" stroke-linejoin="round"/>
<polyline points="1091,226.2 1152.8,226.2 1211,284.5 1211,602.5" fill="none" stroke="#FF0000" stroke-width="6" stroke-linecap="round" stroke-linejoin="round"/>
<polyline points="1061,292.5 1061,430" fill="none" stroke="#FF0000" stroke-width="6" stroke-linecap="round" stroke-linejoin="round"/>
<polyline points="922.8,262.5 986.5,262.5 996,273" fill="none" stroke="#FF0000" stroke-width="6" stroke-linecap="round" stroke-linejoin="round"/>
<polyline points="1128.5,325 1146.5,325" fill="none" stroke="#FF0000" stroke-width="6" stroke-linecap="round" stroke-linejoin="round"/>
<polyline points="1128.5,375 1146.5,375" fill="none" stroke="#FF0000" stroke-width="6" stroke-linecap="round" stroke-linejoin="round"/>
<polyline points="922.8,318.8 950.2,318.8 1006.5,375 1006.5,392.5" fill="none" stroke="#FF0000" stroke-width="6" stroke-linecap="round" stroke-linejoin="round"/>
<polyline points="922.8,366.2 950.2,392.5" fill="none" stroke="#FF0000" stroke-width="6" stroke-linecap="round" stroke-linejoin="round"/>
<polyline points="301,443 326,443" fill="none" stroke="#FF0000" stroke-width="6" stroke-linecap="round" stroke-linejoin="round"/>
<polyline points="326,459 301,459 301,592.5 319,611.2 329,626.2" fill="none" stroke="#FF0000" stroke-width="6" stroke-linecap="round" stroke-linejoin="round"/>
<polyline points="326,475 313.5,475 313.5,566.2 354,607.5" fill="none" stroke="#FF0000" stroke-width="6" stroke-linecap="round" stroke-linejoin="round"/>
<polyline points="370.2,443 384,443 396.5,456.2 396.5,493.8 384,506.8 370.2,506.8" fill="none" stroke="#FF0000" stroke-width="6" stroke-linecap="round" stroke-linejoin="round"/>
<polyline points="370.2,522.5 390.2,522.5 424,488.8 424,440 444,420 467.8,420 482.8,435 482.8,451.2 490.2,459 494,459" fill="none" stroke="#FF0000" stroke-width="6" stroke-linecap="round" stroke-linejoin="round"/>
<polyline points="378.5,522.5 378.5,578.8" fill="none" stroke="#FF0000" stroke-width="6" stroke-linecap="round" stroke-linejoin="round"/>
<polyline points="442.8,452.5 439,456.2 439,486.2 410.2,516.2 410.2,570 435.2,595 435.2,650" fill="none" stroke="#FF0000" stroke-width="6" stroke-linecap="round" stroke-linejoin="round"/>
<polyline points="494,506.8 450.2,506.8 429,527.5 429,563.8 462.8,597.5 470.2,610" fill="none" stroke="#FF0000" stroke-width="6" stroke-linecap="round" stroke-linejoin="round"/>
<polyline points="472.8,480 481.5,490.8 494,490.8" fill="none" stroke="#FF0000" stroke-width="6" stroke-linecap="round" stroke-linejoin="round"/>
<polyline points="457.8,535 457.8,562.5 479,584.5 531.5,584.5 547.8,600 547.8,635.5" fill="none" stroke="#FF0000" stroke-width="6" stroke-linecap="round" stroke-linejoin="round"/>
<polyline points="539,522.5 606.5,522.5" fill="none" stroke="#FF0000" stroke-width="6" stroke-linecap="round" stroke-linejoin="round"/>
<polyline points="539,538.8 606.5,538.8" fill="none" stroke="#FF0000" stroke-width="6" stroke-linecap="round" stroke-linejoin="round"/>
<polyline points="539,554.5 566.5,554.5 579,567" fill="none" stroke="#FF0000" stroke-width="6" stroke-linecap="round" stroke-linejoin="round"/>
<polyline points="729,460 771.5,503.8 809,503.8 896.5,591.2 907.8,592" fill="none" stroke="#FF0000" stroke-width="9" stroke-linecap="round" stroke-linejoin="round"/>
<polyline points="764,466.2 785.2,488 836.5,488 887.8,538.8 907.8,538.8" fill="none" stroke="#FF0000" stroke-width="6" stroke-linecap="round" stroke-linejoin="round"/>
<polyline points="786.5,538 810.2,538 854,581.8 854,650" fill="none" stroke="#FF0000" stroke-width="6" stroke-linecap="round" stroke-linejoin="round"/>
<polyline points="602.8,522.5 681.5,522.5 696.5,537 702.8,537" fill="none" stroke="#FF0000" stroke-width="6" stroke-linecap="round" stroke-linejoin="round"/>
<polyline points="602.8,538.8 657.8,538.8 699,579.5 717,582" fill="none" stroke="#FF0000" stroke-width="6" stroke-linecap="round" stroke-linejoin="round"/>
<polyline points="698.5,466.2 698.5,485 711,495.8" fill="none" stroke="#FF0000" stroke-width="6" stroke-linecap="round" stroke-linejoin="round"/>
<polyline points="779,621.2 779,650" fill="none" stroke="#FF0000" stroke-width="6" stroke-linecap="round" stroke-linejoin="round"/>
<polyline points="817.8,621.2 817.8,650" fill="none" stroke="#FF0000" stroke-width="6" stroke-linecap="round" stroke-linejoin="round"/>
<text x="751.5" y="484.7" font-size="6" fill="#FFE0E0" text-anchor="middle" transform="rotate(45 751.5 482.5)">K-LINE</text>
<text x="790.2" y="506.4" font-size="6" fill="#FFE0E0" text-anchor="middle">K-LINE</text>
<text x="851.5" y="548.4" font-size="6" fill="#FFE0E0" text-anchor="middle" transform="rotate(45 851.5 546.2)">K-LINE</text>
<polyline points="1037,400 1037,451.2 959,451.2" fill="none" stroke="#FF0000" stroke-width="6" stroke-linecap="round" stroke-linejoin="round"/>
<polyline points="959,432.5 959,530.5" fill="none" stroke="#FF0000" stroke-width="6" stroke-linecap="round" stroke-linejoin="round"/>
<polyline points="1061,400 1061,571.2 1009,625 995.2,638.8" fill="none" stroke="#FF0000" stroke-width="6" stroke-linecap="round" stroke-linejoin="round"/>
<polyline points="1061,444.5 1087.8,444.5" fill="none" stroke="#FF0000" stroke-width="6" stroke-linecap="round" stroke-linejoin="round"/>
<polyline points="1128.5,444.5 1146.5,444.5" fill="none" stroke="#FF0000" stroke-width="6" stroke-linecap="round" stroke-linejoin="round"/>
<polyline points="1024,485 1061,485" fill="none" stroke="#FF0000" stroke-width="6" stroke-linecap="round" stroke-linejoin="round"/>
<polyline points="1128.5,500.8 1146.5,500.8" fill="none" stroke="#FF0000" stroke-width="6" stroke-linecap="round" stroke-linejoin="round"/>
<polyline points="964,625 964,650" fill="none" stroke="#FF0000" stroke-width="6" stroke-linecap="round" stroke-linejoin="round"/>
<polyline points="354,607.5 354,642.5 315.2,680 315.2,718.2" fill="none" stroke="#FF0000" stroke-width="6" stroke-linecap="round" stroke-linejoin="round"/>
<polyline points="394,637.5 360.2,670 360.2,718.2" fill="none" stroke="#FF0000" stroke-width="6" stroke-linecap="round" stroke-linejoin="round"/>
<polyline points="435.2,600 435.2,713.8 451.5,730.8 521.5,730.8" fill="none" stroke="#FF0000" stroke-width="6" stroke-linecap="round" stroke-linejoin="round"/>
<polyline points="460.2,637.5 460.2,658.8" fill="none" stroke="#FF0000" stroke-width="6" stroke-linecap="round" stroke-linejoin="round"/>
<polyline points="487,688.8 606.5,688.8" fill="none" stroke="#FF0000" stroke-width="6" stroke-linecap="round" stroke-linejoin="round"/>
<polyline points="547.8,600 547.8,625" fill="none" stroke="#FF0000" stroke-width="6" stroke-linecap="round" stroke-linejoin="round"/>
<polyline points="779,621.2 779,743.8" fill="none" stroke="#FF0000" stroke-width="6" stroke-linecap="round" stroke-linejoin="round"/>
<polyline points="817.8,621.2 817.8,797.5" fill="none" stroke="#FF0000" stroke-width="6" stroke-linecap="round" stroke-linejoin="round"/>
<polyline points="681,709.5 681,772.5 706.5,797.5 926.5,797.5" fill="none" stroke="#FF0000" stroke-width="6" stroke-linecap="round" stroke-linejoin="round"/>
<polyline points="602.8,688.8 615.2,688.8" fill="none" stroke="#FF0000" stroke-width="6" stroke-linecap="round" stroke-linejoin="round"/>
<polyline points="634,709.5 634,775 626,788.8" fill="none" stroke="#FF0000" stroke-width="6" stroke-linecap="round" stroke-linejoin="round"/>
<polyline points="854,598.8 854,660 910.2,716.2 926.5,716.2" fill="none" stroke="#FF0000" stroke-width="6" stroke-linecap="round" stroke-linejoin="round"/>
<polyline points="1211,600 1211,785 1199,797.5 922.8,797.5" fill="none" stroke="#FF0000" stroke-width="6" stroke-linecap="round" stroke-linejoin="round"/>
<polyline points="964,623.8 964,716.2 922.8,716.2" fill="none" stroke="#FF0000" stroke-width="6" stroke-linecap="round" stroke-linejoin="round"/>
<polyline points="995.2,655 995.2,797.5" fill="none" stroke="#FF0000" stroke-width="6" stroke-linecap="round" stroke-linejoin="round"/>
<polyline points="739,315.5 752.8,315.5" fill="none" stroke="#FF0000" stroke-width="6" stroke-linecap="round" stroke-linejoin="round"/>
</g>
<g id="L-netlbl">
<text x="376" y="303.8" font-size="3.6" fill="#FFB4B4" text-anchor="middle" transform="rotate(90 376 302.5)">UTX</text>
<text x="406.5" y="270.4" font-size="3.6" fill="#FFB4B4" text-anchor="middle" transform="rotate(90 406.5 269.1)">RB6</text>
<text x="391" y="334.4" font-size="3.6" fill="#FFB4B4" text-anchor="middle" transform="rotate(90 391 333.1)">RB6</text>
<text x="487.8" y="262.5" font-size="3.6" fill="#FFB4B4" text-anchor="middle">DTR</text>
<text x="428.8" y="287.5" font-size="3.6" fill="#FFB4B4" text-anchor="middle" transform="rotate(-44.7 428.8 286.2)">DTR</text>
<text x="403.5" y="343.8" font-size="3.6" fill="#FFB4B4" text-anchor="middle" transform="rotate(90 403.5 342.5)">DTR</text>
<text x="393.1" y="385.4" font-size="3.6" fill="#FFB4B4" text-anchor="middle" transform="rotate(-45 393.1 384.1)">DTR</text>
<text x="531.8" y="277.5" font-size="3.6" fill="#FFB4B4" text-anchor="middle">CH</text>
<text x="436.1" y="298.4" font-size="3.6" fill="#FFB4B4" text-anchor="middle" transform="rotate(-45 436.1 297.1)">CH</text>
<text x="415.2" y="357.8" font-size="3.6" fill="#FFB4B4" text-anchor="middle" transform="rotate(90 415.2 356.5)">CH</text>
<text x="399.6" y="411.9" font-size="3.6" fill="#FFB4B4" text-anchor="middle" transform="rotate(-45 399.6 410.6)">CH</text>
<text x="301" y="357.8" font-size="3.6" fill="#FFB4B4" text-anchor="middle" transform="rotate(90 301 356.5)">GND</text>
<text x="331.5" y="261.8" font-size="3.6" fill="#FFB4B4" text-anchor="middle">GND</text>
<text x="360.2" y="286.6" font-size="3.6" fill="#FFB4B4" text-anchor="middle" transform="rotate(90 360.2 285.2)">GND</text>
<text x="322.5" y="291.6" font-size="3.6" fill="#FFB4B4" text-anchor="middle" transform="rotate(-43.4 322.5 290.3)">URX</text>
<text x="313.5" y="340.1" font-size="3.6" fill="#FFB4B4" text-anchor="middle" transform="rotate(90 313.5 338.8)">URX</text>
<text x="313.5" y="395.8" font-size="3.6" fill="#FFB4B4" text-anchor="middle">Dp</text>
<text x="492.1" y="330.5" font-size="3.6" fill="#FFB4B4" text-anchor="middle">KTX</text>
<text x="546.5" y="427.2" font-size="3.6" fill="#FFB4B4" text-anchor="middle" transform="rotate(90 546.5 425.9)">KTX</text>
<text x="587.8" y="398.2" font-size="3.6" fill="#FFB4B4" text-anchor="middle" transform="rotate(-45.9 587.8 396.9)">CL</text>
<text x="744.8" y="264.8" font-size="3.6" fill="#FFB4B4" text-anchor="middle" transform="rotate(90 744.8 263.5)">CL</text>
<text x="732.8" y="277.1" font-size="3.6" fill="#FFB4B4" text-anchor="middle">+5V</text>
<text x="901.5" y="263.8" font-size="3.6" fill="#FFB4B4" text-anchor="middle">+5V</text>
<text x="861" y="314.4" font-size="3.6" fill="#FFB4B4" text-anchor="middle" transform="rotate(90 861 313.1)">MRX</text>
<text x="848.6" y="349.1" font-size="3.6" fill="#FFB4B4" text-anchor="middle">Dm</text>
<text x="915.9" y="359.1" font-size="3.6" fill="#FFB4B4" text-anchor="middle" transform="rotate(43.9 915.9 357.8)">Dm</text>
<text x="610.9" y="376.3" font-size="3.6" fill="#FFB4B4" text-anchor="middle" transform="rotate(-44.6 610.9 375)">KRX</text>
<text x="662.1" y="368.3" font-size="3.6" fill="#FFB4B4" text-anchor="middle">KRX</text>
<text x="717.1" y="356.7" font-size="3.6" fill="#FFB4B4" text-anchor="middle" transform="rotate(-44.3 717.1 355.4)">KRX</text>
<text x="821.5" y="386.3" font-size="3.6" fill="#FFB4B4" text-anchor="middle">RB7</text>
<text x="616.5" y="449.2" font-size="3.6" fill="#FFB4B4" text-anchor="middle" transform="rotate(-44.8 616.5 447.9)">RTS</text>
<text x="723.4" y="402.1" font-size="3.6" fill="#FFB4B4" text-anchor="middle">RTS</text>
<text x="975" y="227.1" font-size="3.6" fill="#FFB4B4" text-anchor="middle">GND</text>
<text x="1007.1" y="237.7" font-size="3.6" fill="#FFB4B4" text-anchor="middle" transform="rotate(44.9 1007.1 236.4)">GND</text>
<text x="1017.8" y="276.7" font-size="3.6" fill="#FFB4B4" text-anchor="middle" transform="rotate(90 1017.8 275.4)">GND</text>
<text x="997.8" y="325.7" font-size="3.6" fill="#FFB4B4" text-anchor="middle" transform="rotate(-45.8 997.8 324.4)">GND</text>
<text x="1037" y="334.4" font-size="3.6" fill="#FFB4B4" text-anchor="middle" transform="rotate(90 1037 333.1)">URX</text>
<text x="1121.9" y="227.5" font-size="3.6" fill="#FFB4B4" text-anchor="middle">Dp</text>
<text x="1181.9" y="256.6" font-size="3.6" fill="#FFB4B4" text-anchor="middle" transform="rotate(45 1181.9 255.3)">Dp</text>
<text x="1211" y="444.8" font-size="3.6" fill="#FFB4B4" text-anchor="middle" transform="rotate(90 1211 443.5)">Dp</text>
<text x="1061" y="362.6" font-size="3.6" fill="#FFB4B4" text-anchor="middle" transform="rotate(90 1061 361.2)">KTX</text>
<text x="954.6" y="263.8" font-size="3.6" fill="#FFB4B4" text-anchor="middle">CL</text>
<text x="936.5" y="320.1" font-size="3.6" fill="#FFB4B4" text-anchor="middle">Dm</text>
<text x="978.4" y="348.2" font-size="3.6" fill="#FFB4B4" text-anchor="middle" transform="rotate(44.9 978.4 346.9)">Dm</text>
<text x="936.5" y="380.7" font-size="3.6" fill="#FFB4B4" text-anchor="middle" transform="rotate(43.8 936.5 379.4)">KRX</text>
<text x="313.5" y="444.3" font-size="3.6" fill="#FFB4B4" text-anchor="middle">RB7</text>
<text x="313.5" y="460.3" font-size="3.6" fill="#FFB4B4" text-anchor="middle">RTS</text>
<text x="301" y="527" font-size="3.6" fill="#FFB4B4" text-anchor="middle" transform="rotate(90 301 525.8)">RTS</text>
<text x="310" y="603.1" font-size="3.6" fill="#FFB4B4" text-anchor="middle" transform="rotate(46.1 310 601.9)">RTS</text>
<text x="313.5" y="521.9" font-size="3.6" fill="#FFB4B4" text-anchor="middle" transform="rotate(90 313.5 520.6)">NRTS</text>
<text x="333.8" y="588.1" font-size="3.6" fill="#FFB4B4" text-anchor="middle" transform="rotate(45.6 333.8 586.9)">NRTS</text>
<text x="396.5" y="476.3" font-size="3.6" fill="#FFB4B4" text-anchor="middle" transform="rotate(90 396.5 475)">+12V</text>
<text x="407.1" y="506.9" font-size="3.6" fill="#FFB4B4" text-anchor="middle" transform="rotate(-44.9 407.1 505.6)">UTX</text>
<text x="424" y="465.7" font-size="3.6" fill="#FFB4B4" text-anchor="middle" transform="rotate(90 424 464.4)">UTX</text>
<text x="434" y="431.3" font-size="3.6" fill="#FFB4B4" text-anchor="middle" transform="rotate(-45 434 430)">UTX</text>
<text x="455.9" y="421.3" font-size="3.6" fill="#FFB4B4" text-anchor="middle">UTX</text>
<text x="378.5" y="551.9" font-size="3.6" fill="#FFB4B4" text-anchor="middle" transform="rotate(90 378.5 550.6)">RB6</text>
<text x="439" y="472.5" font-size="3.6" fill="#FFB4B4" text-anchor="middle" transform="rotate(90 439 471.2)">DTR</text>
<text x="424.6" y="502.5" font-size="3.6" fill="#FFB4B4" text-anchor="middle" transform="rotate(-46.2 424.6 501.2)">DTR</text>
<text x="410.2" y="544.4" font-size="3.6" fill="#FFB4B4" text-anchor="middle" transform="rotate(90 410.2 543.1)">DTR</text>
<text x="422.7" y="583.8" font-size="3.6" fill="#FFB4B4" text-anchor="middle" transform="rotate(45 422.7 582.5)">DTR</text>
<text x="435.2" y="623.8" font-size="3.6" fill="#FFB4B4" text-anchor="middle" transform="rotate(90 435.2 622.5)">DTR</text>
<text x="472.1" y="508.1" font-size="3.6" fill="#FFB4B4" text-anchor="middle">CH</text>
<text x="439.6" y="518.4" font-size="3.6" fill="#FFB4B4" text-anchor="middle" transform="rotate(-44.3 439.6 517.1)">CH</text>
<text x="429" y="546.9" font-size="3.6" fill="#FFB4B4" text-anchor="middle" transform="rotate(90 429 545.6)">CH</text>
<text x="445.9" y="581.9" font-size="3.6" fill="#FFB4B4" text-anchor="middle" transform="rotate(44.9 445.9 580.6)">CH</text>
<text x="457.8" y="550" font-size="3.6" fill="#FFB4B4" text-anchor="middle" transform="rotate(90 457.8 548.8)">URX</text>
<text x="468.4" y="574.8" font-size="3.6" fill="#FFB4B4" text-anchor="middle" transform="rotate(46.1 468.4 573.5)">URX</text>
<text x="505.2" y="585.8" font-size="3.6" fill="#FFB4B4" text-anchor="middle">URX</text>
<text x="539.6" y="593.5" font-size="3.6" fill="#FFB4B4" text-anchor="middle" transform="rotate(43.6 539.6 592.2)">URX</text>
<text x="547.8" y="619" font-size="3.6" fill="#FFB4B4" text-anchor="middle" transform="rotate(90 547.8 617.8)">URX</text>
<text x="572.8" y="523.8" font-size="3.6" fill="#FFB4B4" text-anchor="middle">Dp</text>
<text x="572.8" y="540.1" font-size="3.6" fill="#FFB4B4" text-anchor="middle">KTX</text>
<text x="552.8" y="555.8" font-size="3.6" fill="#FFB4B4" text-anchor="middle">CL</text>
<text x="774.6" y="478.4" font-size="3.6" fill="#FFB4B4" text-anchor="middle" transform="rotate(45.8 774.6 477.1)">RB6</text>
<text x="810.9" y="489.3" font-size="3.6" fill="#FFB4B4" text-anchor="middle">RB6</text>
<text x="862.1" y="514.7" font-size="3.6" fill="#FFB4B4" text-anchor="middle" transform="rotate(44.7 862.1 513.4)">RB6</text>
<text x="798.4" y="539.3" font-size="3.6" fill="#FFB4B4" text-anchor="middle">DTR</text>
<text x="832.1" y="561.2" font-size="3.6" fill="#FFB4B4" text-anchor="middle" transform="rotate(45 832.1 559.9)">DTR</text>
<text x="854" y="617.2" font-size="3.6" fill="#FFB4B4" text-anchor="middle" transform="rotate(90 854 615.9)">DTR</text>
<text x="642.1" y="523.8" font-size="3.6" fill="#FFB4B4" text-anchor="middle">CH</text>
<text x="630.3" y="540.1" font-size="3.6" fill="#FFB4B4" text-anchor="middle">GND</text>
<text x="678.4" y="560.4" font-size="3.6" fill="#FFB4B4" text-anchor="middle" transform="rotate(44.7 678.4 559.1)">GND</text>
<text x="1037" y="426.9" font-size="3.6" fill="#FFB4B4" text-anchor="middle" transform="rotate(90 1037 425.6)">KRX</text>
<text x="998" y="452.5" font-size="3.6" fill="#FFB4B4" text-anchor="middle">KRX</text>
<text x="959" y="482.8" font-size="3.6" fill="#FFB4B4" text-anchor="middle" transform="rotate(90 959 481.5)">RB7</text>
<text x="1061" y="486.9" font-size="3.6" fill="#FFB4B4" text-anchor="middle" transform="rotate(90 1061 485.6)">RTS</text>
<text x="1035" y="599.4" font-size="3.6" fill="#FFB4B4" text-anchor="middle" transform="rotate(-46 1035 598.1)">RTS</text>
<text x="1074.4" y="445.8" font-size="3.6" fill="#FFB4B4" text-anchor="middle">NRTS</text>
<text x="964" y="638.8" font-size="3.6" fill="#FFB4B4" text-anchor="middle" transform="rotate(90 964 637.5)">RB6</text>
<text x="354" y="626.3" font-size="3.6" fill="#FFB4B4" text-anchor="middle" transform="rotate(90 354 625)">+5V</text>
<text x="334.6" y="662.5" font-size="3.6" fill="#FFB4B4" text-anchor="middle" transform="rotate(-44 334.6 661.2)">+5V</text>
<text x="315.2" y="700.4" font-size="3.6" fill="#FFB4B4" text-anchor="middle" transform="rotate(90 315.2 699.1)">+5V</text>
<text x="377.1" y="655" font-size="3.6" fill="#FFB4B4" text-anchor="middle" transform="rotate(-43.9 377.1 653.8)">MRX</text>
<text x="360.2" y="695.4" font-size="3.6" fill="#FFB4B4" text-anchor="middle" transform="rotate(90 360.2 694.1)">MRX</text>
<text x="435.2" y="658.2" font-size="3.6" fill="#FFB4B4" text-anchor="middle" transform="rotate(90 435.2 656.9)">Dm</text>
<text x="443.4" y="723.6" font-size="3.6" fill="#FFB4B4" text-anchor="middle" transform="rotate(46.2 443.4 722.3)">Dm</text>
<text x="486.5" y="732.1" font-size="3.6" fill="#FFB4B4" text-anchor="middle">Dm</text>
<text x="546.8" y="690.1" font-size="3.6" fill="#FFB4B4" text-anchor="middle">RB7</text>
<text x="547.8" y="613.8" font-size="3.6" fill="#FFB4B4" text-anchor="middle" transform="rotate(90 547.8 612.5)">RTS</text>
<text x="779" y="683.8" font-size="3.6" fill="#FFB4B4" text-anchor="middle" transform="rotate(90 779 682.5)">GND</text>
<text x="817.8" y="710.6" font-size="3.6" fill="#FFB4B4" text-anchor="middle" transform="rotate(90 817.8 709.4)">URX</text>
<text x="681" y="742.3" font-size="3.6" fill="#FFB4B4" text-anchor="middle" transform="rotate(90 681 741)">Dp</text>
<text x="693.8" y="786.3" font-size="3.6" fill="#FFB4B4" text-anchor="middle" transform="rotate(44.4 693.8 785)">Dp</text>
<text x="816.5" y="798.8" font-size="3.6" fill="#FFB4B4" text-anchor="middle">Dp</text>
<text x="634" y="743.5" font-size="3.6" fill="#FFB4B4" text-anchor="middle" transform="rotate(90 634 742.2)">CL</text>
<text x="854" y="630.7" font-size="3.6" fill="#FFB4B4" text-anchor="middle" transform="rotate(90 854 629.4)">+5V</text>
<text x="882.1" y="689.4" font-size="3.6" fill="#FFB4B4" text-anchor="middle" transform="rotate(45 882.1 688.1)">+5V</text>
<text x="1211" y="693.8" font-size="3.6" fill="#FFB4B4" text-anchor="middle" transform="rotate(90 1211 692.5)">RB7</text>
<text x="1060.9" y="798.8" font-size="3.6" fill="#FFB4B4" text-anchor="middle">RB7</text>
<text x="964" y="671.3" font-size="3.6" fill="#FFB4B4" text-anchor="middle" transform="rotate(90 964 670)">RTS</text>
<text x="943.4" y="717.5" font-size="3.6" fill="#FFB4B4" text-anchor="middle">RTS</text>
<text x="995.2" y="727.5" font-size="3.6" fill="#FFB4B4" text-anchor="middle" transform="rotate(90 995.2 726.2)">NRTS</text>
</g>
<g id="L-rpad">
<rect x="327" y="341.6" width="42.2" height="11.8" fill="#FF0000" stroke="#800080" stroke-width="2"/>
<rect x="494.5" y="341.6" width="43.5" height="11.8" fill="#FF0000" stroke="#800080" stroke-width="2"/>
<rect x="327" y="357.6" width="42.2" height="11.7" fill="#FF0000" stroke="#800080" stroke-width="2"/>
<rect x="494.5" y="357.6" width="43.5" height="11.7" fill="#FF0000" stroke="#800080" stroke-width="2"/>
<rect x="327" y="373.5" width="42.2" height="11.7" fill="#FF0000" stroke="#800080" stroke-width="2"/>
<rect x="494.5" y="373.5" width="43.5" height="11.7" fill="#FF0000" stroke="#800080" stroke-width="2"/>
<rect x="327" y="389.4" width="42.2" height="11.7" fill="#FF0000" stroke="#800080" stroke-width="2"/>
<rect x="494.5" y="389.4" width="43.5" height="11.7" fill="#FF0000" stroke="#800080" stroke-width="2"/>
<rect x="327" y="405.3" width="42.2" height="11.8" fill="#FF0000" stroke="#800080" stroke-width="2"/>
<rect x="494.5" y="405.3" width="43.5" height="11.8" fill="#FF0000" stroke="#800080" stroke-width="2"/>
<rect x="327" y="421.2" width="42.2" height="11.8" fill="#FF0000" stroke="#800080" stroke-width="2"/>
<rect x="494.5" y="421.2" width="43.5" height="11.8" fill="#FF0000" stroke="#800080" stroke-width="2"/>
<rect x="327" y="437.2" width="42.2" height="11.7" fill="#FF0000" stroke="#800080" stroke-width="2"/>
<rect x="494.5" y="437.2" width="43.5" height="11.7" fill="#FF0000" stroke="#800080" stroke-width="2"/>
<rect x="327" y="453.1" width="42.2" height="11.8" fill="#FF0000" stroke="#800080" stroke-width="2"/>
<rect x="494.5" y="453.1" width="43.5" height="11.8" fill="#FF0000" stroke="#800080" stroke-width="2"/>
<rect x="327" y="469" width="42.2" height="11.8" fill="#FF0000" stroke="#800080" stroke-width="2"/>
<rect x="494.5" y="469" width="43.5" height="11.8" fill="#FF0000" stroke="#800080" stroke-width="2"/>
<rect x="327" y="485" width="42.2" height="11.7" fill="#FF0000" stroke="#800080" stroke-width="2"/>
<rect x="494.5" y="485" width="43.5" height="11.7" fill="#FF0000" stroke="#800080" stroke-width="2"/>
<rect x="327" y="500.9" width="42.2" height="11.7" fill="#FF0000" stroke="#800080" stroke-width="2"/>
<rect x="494.5" y="500.9" width="43.5" height="11.7" fill="#FF0000" stroke="#800080" stroke-width="2"/>
<rect x="327" y="516.8" width="42.2" height="11.7" fill="#FF0000" stroke="#800080" stroke-width="2"/>
<rect x="494.5" y="516.8" width="43.5" height="11.7" fill="#FF0000" stroke="#800080" stroke-width="2"/>
<rect x="327" y="532.7" width="42.2" height="11.8" fill="#FF0000" stroke="#800080" stroke-width="2"/>
<rect x="494.5" y="532.7" width="43.5" height="11.8" fill="#FF0000" stroke="#800080" stroke-width="2"/>
<rect x="327" y="548.6" width="42.2" height="11.8" fill="#FF0000" stroke="#800080" stroke-width="2"/>
<rect x="494.5" y="548.6" width="43.5" height="11.8" fill="#FF0000" stroke="#800080" stroke-width="2"/>
<rect x="689" y="291.5" width="19" height="50.5" fill="#FF0000" stroke="#800080" stroke-width="2" rx="9.5"/>
<rect x="719.5" y="291.5" width="19" height="50.5" fill="#FF0000" stroke="#800080" stroke-width="2" rx="9.5"/>
<rect x="750.8" y="291.5" width="19" height="50.5" fill="#FF0000" stroke="#800080" stroke-width="2" rx="9.5"/>
<rect x="783" y="291" width="18.8" height="51" fill="#FF0000" stroke="#800080" stroke-width="2"/>
<rect x="689" y="415.5" width="19" height="50.5" fill="#FF0000" stroke="#800080" stroke-width="2" rx="9.5"/>
<rect x="719.5" y="415.5" width="19" height="50.5" fill="#FF0000" stroke="#800080" stroke-width="2" rx="9.5"/>
<rect x="750.8" y="415.5" width="19" height="50.5" fill="#FF0000" stroke="#800080" stroke-width="2" rx="9.5"/>
<rect x="782" y="415.5" width="19" height="50.5" fill="#FF0000" stroke="#800080" stroke-width="2" rx="9.5"/>
<rect x="1050.5" y="209.7" width="39" height="34.6" fill="#FF0000" stroke="#800080" stroke-width="3"/>
<rect x="1050.5" y="256.5" width="39" height="34.5" fill="#FF0000" stroke="#800080" stroke-width="3"/>
<rect x="1089.3" y="310.3" width="37.7" height="33.2" fill="#FF0000" stroke="#800080" stroke-width="3"/>
<rect x="1089.3" y="357.3" width="37.7" height="33.7" fill="#FF0000" stroke="#800080" stroke-width="3"/>
<text x="1069.8" y="229.5" font-size="5.5" fill="#FFC0C0" text-anchor="middle">+5V</text>
<text x="1069.8" y="276.5" font-size="5.5" fill="#FFC0C0" text-anchor="middle">GND</text>
<text x="1108.2" y="329.5" font-size="5.5" fill="#FFC0C0" text-anchor="middle">CH</text>
<text x="1108.2" y="376.5" font-size="5.5" fill="#FFC0C0" text-anchor="middle">CL</text>
<rect x="704.3" y="520.3" width="33.7" height="37.4" fill="#FF0000" stroke="#800080" stroke-width="3"/>
<rect x="751.3" y="520.3" width="33.7" height="37.4" fill="#FF0000" stroke="#800080" stroke-width="3"/>
<rect x="755" y="582" width="33.7" height="37.7" fill="#FF0000" stroke="#800080" stroke-width="3"/>
<rect x="801" y="582" width="34" height="37.7" fill="#FF0000" stroke="#800080" stroke-width="3"/>
<text x="721" y="541" font-size="5.5" fill="#FFC0C0" text-anchor="middle">RTS</text>
<text x="768" y="540.8" font-size="5" fill="#FFC0C0" text-anchor="middle">NetD1_3</text>
<text x="771.5" y="602.6" font-size="5" fill="#FFC0C0" text-anchor="middle">NetIc-1</text>
<text x="818" y="602.6" font-size="5" fill="#FFC0C0" text-anchor="middle">Gk</text>
<rect x="942.5" y="394.5" width="33" height="36.5" fill="#FF0000" stroke="#800080" stroke-width="3"/>
<rect x="989.3" y="394.5" width="33.2" height="36.5" fill="#FF0000" stroke="#800080" stroke-width="3"/>
<text x="959" y="414.3" font-size="5" fill="#FFC0C0" text-anchor="middle">+5V</text>
<text x="1006" y="414.5" font-size="5.5" fill="#FFC0C0" text-anchor="middle">DTR</text>
<rect x="942.5" y="470.3" width="33" height="37" fill="#FF0000" stroke="#800080" stroke-width="3"/>
<rect x="989.3" y="470.3" width="33.2" height="37" fill="#FF0000" stroke="#800080" stroke-width="3"/>
<rect x="942.5" y="532" width="33" height="37.7" fill="#FF0000" stroke="#800080" stroke-width="3"/>
<rect x="989.3" y="532" width="33.2" height="37.7" fill="#FF0000" stroke="#800080" stroke-width="3"/>
<text x="959" y="490.6" font-size="5" fill="#FFC0C0" text-anchor="middle">+5V</text>
<text x="1006" y="490.8" font-size="5.5" fill="#FFC0C0" text-anchor="middle">GND</text>
<text x="959" y="552.6" font-size="5" fill="#FFC0C0" text-anchor="middle">+5V</text>
<rect x="1089.3" y="436.5" width="37.7" height="33.2" fill="#FF0000" stroke="#800080" stroke-width="3"/>
<rect x="1089.3" y="482" width="37.7" height="33.5" fill="#FF0000" stroke="#800080" stroke-width="3"/>
<text x="1107.8" y="455.2" font-size="5.5" fill="#FFC0C0" text-anchor="middle">GND</text>
<text x="1107.8" y="501.2" font-size="5.5" fill="#FFC0C0" text-anchor="middle">+12V</text>
<rect x="303.5" y="719.3" width="34.5" height="39.2" fill="#FF0000" stroke="#800080" stroke-width="3"/>
<rect x="350" y="719.3" width="35" height="39.2" fill="#FF0000" stroke="#800080" stroke-width="3"/>
<text x="321" y="740.8" font-size="5" fill="#FFC0C0" text-anchor="middle">A8</text>
<text x="368.5" y="740.8" font-size="5" fill="#FFC0C0" text-anchor="middle">NetD1_3</text>
<rect x="616.7" y="670.3" width="34.6" height="37.7" fill="#FF0000" stroke="#800080" stroke-width="3"/>
<rect x="664.3" y="670.3" width="33.7" height="37.7" fill="#FF0000" stroke="#800080" stroke-width="3"/>
<text x="634" y="690.8" font-size="5" fill="#FFC0C0" text-anchor="middle">+5V</text>
<text x="681" y="691" font-size="5.5" fill="#FFC0C0" text-anchor="middle">GND</text>
<rect x="1030" y="756.5" width="33.7" height="38.2" fill="#FF0000" stroke="#800080" stroke-width="3"/>
<rect x="1076.7" y="756.5" width="34.6" height="38.2" fill="#FF0000" stroke="#800080" stroke-width="3"/>
<text x="1094" y="778" font-size="5" fill="#FFC0C0" text-anchor="middle">+5V</text>
</g>
<g id="L-olive">
<polyline points="318.5,217.5 318.5,236.2" fill="none" stroke="#808000" stroke-width="2" stroke-linecap="round" stroke-linejoin="round"/>
<polyline points="318.5,222.5 324,222.5" fill="none" stroke="#808000" stroke-width="2" stroke-linecap="round" stroke-linejoin="round"/>
<polyline points="324,238.8 319,245.5 326.5,251.2 339,252" fill="none" stroke="#808000" stroke-width="2.5" stroke-linecap="round" stroke-linejoin="round"/>
<polyline points="445.5,355 494.5,355 494.5,572 445.5,572 445.5,355" fill="none" stroke="#808000" stroke-width="4.5" stroke-linecap="square" stroke-linejoin="round"/>
<circle cx="527.8" cy="349.5" r="5.5" fill="#808000"/>
<text transform="translate(430.2 289.5) scale(-1 1)" font-family="Liberation Serif,serif" font-size="40" fill="#808000" text-anchor="middle" y="13.2" textLength="62.5" lengthAdjust="spacingAndGlyphs">10n</text>
<polyline points="669,278.8 821.5,278.8 821.5,723.8 669,723.8 669,278.8" fill="none" stroke="#808000" stroke-width="5" stroke-linecap="square" stroke-linejoin="round"/>
<circle cx="856.5" cy="277.0" r="5.5" fill="#808000"/>
<path d="M932.8 362.0H1058.5V395.0H932.8V386.2A7 7 0 0 0 932.8 371.2Z" fill="none" stroke="#808000" stroke-width="1.5"/>
<text transform="translate(1086 589.2) scale(-1 1)" font-family="Liberation Serif,serif" font-size="40" fill="#808000" text-anchor="middle" y="13.2" textLength="86" lengthAdjust="spacingAndGlyphs">680R</text>
<text transform="translate(1044.5 656.2) rotate(-90)" font-family="Liberation Serif,serif" font-size="44" fill="#808000" text-anchor="middle" y="14.5" textLength="62" lengthAdjust="spacingAndGlyphs">ssb</text>
</g>
<g id="L-multi">
<rect x="325" y="203.2" width="39" height="46" rx="11" fill="#C0C0C0" stroke="#800080" stroke-width="3"/>
<circle cx="344.5" cy="226.2" r="12" fill="#008E8E"/>
<text x="344.5" y="228.5" font-size="6.5" fill="#FFF080" text-anchor="middle" font-weight="bold">Dp</text>
<rect x="387.5" y="203.2" width="39" height="46" rx="11" fill="#C0C0C0" stroke="#800080" stroke-width="3"/>
<circle cx="407" cy="226.2" r="12" fill="#008E8E"/>
<text x="407" y="228.5" font-size="6.5" fill="#FFF080" text-anchor="middle" font-weight="bold">Dm</text>
<rect x="450" y="203.2" width="39" height="46" rx="11" fill="#C0C0C0" stroke="#800080" stroke-width="3"/>
<circle cx="469.5" cy="226.2" r="12" fill="#008E8E"/>
<text x="469.5" y="228.5" font-size="6.5" fill="#FFF080" text-anchor="middle" font-weight="bold">+5V</text>
<rect x="512.5" y="203.2" width="39" height="46" rx="0" fill="#C0C0C0" stroke="#800080" stroke-width="3"/>
<circle cx="532" cy="226.2" r="12" fill="#008E8E"/>
<text x="532" y="228.5" font-size="6.5" fill="#FFF080" text-anchor="middle" font-weight="bold">GND</text>
<circle cx="331.5" cy="281.8" r="12.8" fill="#C0C0C0" stroke="#800080" stroke-width="2.5"/>
<circle cx="331.5" cy="281.8" r="5" fill="#8B6508"/>
<text x="331.5" y="283.6" font-size="5" fill="#FFF080" text-anchor="middle" font-weight="bold">NetC1</text>
<circle cx="338.5" cy="319.5" r="12.8" fill="#C0C0C0" stroke="#800080" stroke-width="2.5"/>
<circle cx="338.5" cy="319.5" r="5" fill="#8B6508"/>
<text x="338.5" y="321.3" font-size="5" fill="#FFF080" text-anchor="middle" font-weight="bold">GND</text>
<circle cx="437.8" cy="329.2" r="12.8" fill="#C0C0C0" stroke="#800080" stroke-width="2.5"/>
<circle cx="437.8" cy="329.2" r="5" fill="#8B6508"/>
<text x="437.8" y="331" font-size="5" fill="#FFF080" text-anchor="middle" font-weight="bold">RTS</text>
<rect x="662.3" y="203.2" width="39" height="46" rx="0" fill="#C0C0C0" stroke="#800080" stroke-width="3"/>
<circle cx="681.8" cy="226.2" r="12" fill="#008E8E"/>
<text x="681.8" y="228.5" font-size="6.5" fill="#FFF080" text-anchor="middle" font-weight="bold">GND</text>
<rect x="725.3" y="203.2" width="39" height="46" rx="11" fill="#C0C0C0" stroke="#800080" stroke-width="3"/>
<circle cx="744.8" cy="226.2" r="12" fill="#008E8E"/>
<text x="744.8" y="228.5" font-size="6.5" fill="#FFF080" text-anchor="middle" font-weight="bold">+5V</text>
<rect x="787.5" y="203.2" width="39" height="46" rx="11" fill="#C0C0C0" stroke="#800080" stroke-width="3"/>
<circle cx="807" cy="226.2" r="12" fill="#008E8E"/>
<text x="807" y="228.5" font-size="6.5" fill="#FFF080" text-anchor="middle" font-weight="bold">RB7</text>
<rect x="850.3" y="203.2" width="39" height="46" rx="11" fill="#C0C0C0" stroke="#800080" stroke-width="3"/>
<circle cx="869.8" cy="226.2" r="12" fill="#008E8E"/>
<text x="869.8" y="228.5" font-size="6.5" fill="#FFF080" text-anchor="middle" font-weight="bold">RB6</text>
<rect x="912.7" y="203.2" width="39" height="46" rx="11" fill="#C0C0C0" stroke="#800080" stroke-width="3"/>
<circle cx="932.2" cy="226.2" r="12" fill="#008E8E"/>
<text x="932.2" y="228.5" font-size="6.5" fill="#FFF080" text-anchor="middle" font-weight="bold">DTR</text>
<circle cx="797.2" cy="302.5" r="14" fill="#808000"/>
<circle cx="911" cy="320" r="12.8" fill="#C0C0C0" stroke="#800080" stroke-width="2.5"/>
<circle cx="911" cy="320" r="5" fill="#8B6508"/>
<text x="911" y="321.8" font-size="5" fill="#FFF080" text-anchor="middle" font-weight="bold">DTR</text>
<circle cx="792" cy="348" r="12.8" fill="#C0C0C0" stroke="#800080" stroke-width="2.5"/>
<circle cx="792" cy="348" r="5" fill="#8B6508"/>
<text x="792" y="349.8" font-size="5" fill="#FFF080" text-anchor="middle" font-weight="bold">+5V</text>
<circle cx="742" cy="370" r="12.8" fill="#C0C0C0" stroke="#800080" stroke-width="2.5"/>
<circle cx="742" cy="370" r="5" fill="#8B6508"/>
<text x="742" y="371.8" font-size="5" fill="#FFF080" text-anchor="middle" font-weight="bold">CANTX</text>
<circle cx="911" cy="410" r="12.8" fill="#C0C0C0" stroke="#800080" stroke-width="2.5"/>
<circle cx="911" cy="410" r="5" fill="#8B6508"/>
<text x="911" y="411.8" font-size="5" fill="#FFF080" text-anchor="middle" font-weight="bold">CANTX</text>
<rect x="1147.3" y="291.3" width="45" height="45" rx="11" fill="#C0C0C0" stroke="#800080" stroke-width="3"/>
<circle cx="1169.8" cy="313.8" r="11.5" fill="#008E8E"/>
<text x="1169.8" y="316.1" font-size="6.5" fill="#FFF080" text-anchor="middle" font-weight="bold">CH</text>
<rect x="1147.3" y="353.7" width="45" height="45" rx="11" fill="#C0C0C0" stroke="#800080" stroke-width="3"/>
<circle cx="1169.8" cy="376.2" r="11.5" fill="#008E8E"/>
<text x="1169.8" y="378.5" font-size="6.5" fill="#FFF080" text-anchor="middle" font-weight="bold">CL</text>
<rect x="1147.3" y="416.1" width="45" height="45" rx="11" fill="#C0C0C0" stroke="#800080" stroke-width="3"/>
<circle cx="1169.8" cy="438.6" r="11.5" fill="#008E8E"/>
<text x="1169.8" y="440.9" font-size="6.5" fill="#FFF080" text-anchor="middle" font-weight="bold">GND</text>
<rect x="1147.3" y="478.5" width="45" height="45" rx="11" fill="#C0C0C0" stroke="#800080" stroke-width="3"/>
<circle cx="1169.8" cy="501" r="11.5" fill="#008E8E"/>
<text x="1169.8" y="503.3" font-size="6.5" fill="#FFF080" text-anchor="middle" font-weight="bold">+12V</text>
<rect x="1147.3" y="541" width="45" height="45" rx="11" fill="#C0C0C0" stroke="#800080" stroke-width="3"/>
<circle cx="1169.8" cy="563.5" r="11.5" fill="#008E8E"/>
<rect x="1147.3" y="603.4" width="45" height="45" rx="11" fill="#C0C0C0" stroke="#800080" stroke-width="3"/>
<circle cx="1169.8" cy="625.9" r="11.5" fill="#008E8E"/>
<text x="1169.8" y="628.2" font-size="6.5" fill="#FFF080" text-anchor="middle" font-weight="bold">K-LINE</text>
<rect x="1147.3" y="665.8" width="45" height="45" rx="11" fill="#C0C0C0" stroke="#800080" stroke-width="3"/>
<circle cx="1169.8" cy="688.3" r="11.5" fill="#008E8E"/>
<rect x="1147.3" y="728.2" width="45" height="45" rx="11" fill="#C0C0C0" stroke="#800080" stroke-width="3"/>
<circle cx="1169.8" cy="750.7" r="11.5" fill="#008E8E"/>
<circle cx="996" cy="273" r="12.8" fill="#C0C0C0" stroke="#800080" stroke-width="2.5"/>
<circle cx="996" cy="273" r="5" fill="#8B6508"/>
<text x="996" y="274.8" font-size="5" fill="#FFF080" text-anchor="middle" font-weight="bold">+5V</text>
<circle cx="454" cy="442" r="12.8" fill="#C0C0C0" stroke="#800080" stroke-width="2.5"/>
<circle cx="454" cy="442" r="5" fill="#8B6508"/>
<text x="454" y="443.8" font-size="5" fill="#FFF080" text-anchor="middle" font-weight="bold">NRTS</text>
<circle cx="472.8" cy="480" r="12.8" fill="#C0C0C0" stroke="#800080" stroke-width="2.5"/>
<circle cx="472.8" cy="480" r="5" fill="#8B6508"/>
<text x="472.8" y="481.8" font-size="5" fill="#FFF080" text-anchor="middle" font-weight="bold">URX</text>
<circle cx="457.8" cy="535" r="12.8" fill="#C0C0C0" stroke="#800080" stroke-width="2.5"/>
<circle cx="457.8" cy="535" r="5" fill="#8B6508"/>
<text x="457.8" y="536.8" font-size="5" fill="#FFF080" text-anchor="middle" font-weight="bold">MRX</text>
<circle cx="569.8" cy="432" r="12.8" fill="#C0C0C0" stroke="#800080" stroke-width="2.5"/>
<circle cx="569.8" cy="432" r="5" fill="#8B6508"/>
<text x="569.8" y="433.8" font-size="5" fill="#FFF080" text-anchor="middle" font-weight="bold">KTX</text>
<circle cx="569" cy="495" r="12.8" fill="#C0C0C0" stroke="#800080" stroke-width="2.5"/>
<circle cx="569" cy="495" r="5" fill="#8B6508"/>
<text x="569" y="496.8" font-size="5" fill="#FFF080" text-anchor="middle" font-weight="bold">KRX</text>
<circle cx="579" cy="567" r="12.8" fill="#C0C0C0" stroke="#800080" stroke-width="2.5"/>
<circle cx="579" cy="567" r="5" fill="#8B6508"/>
<text x="579" y="568.8" font-size="5" fill="#FFF080" text-anchor="middle" font-weight="bold">UTX</text>
<circle cx="379" cy="578.8" r="12.8" fill="#C0C0C0" stroke="#800080" stroke-width="2.5"/>
<circle cx="379" cy="578.8" r="5" fill="#8B6508"/>
<text x="379" y="580.6" font-size="5" fill="#FFF080" text-anchor="middle" font-weight="bold">GND</text>
<circle cx="329" cy="626.2" r="12.8" fill="#C0C0C0" stroke="#800080" stroke-width="2.5"/>
<circle cx="329" cy="626.2" r="5" fill="#8B6508"/>
<text x="329" y="628" font-size="5" fill="#FFF080" text-anchor="middle" font-weight="bold">A8</text>
<circle cx="547.8" cy="635.5" r="12.8" fill="#C0C0C0" stroke="#800080" stroke-width="2.5"/>
<circle cx="547.8" cy="635.5" r="5" fill="#8B6508"/>
<text x="547.8" y="637.3" font-size="5" fill="#FFF080" text-anchor="middle" font-weight="bold">MRX</text>
<rect x="385" y="598" width="38" height="38" rx="11" fill="#C0C0C0" stroke="#800080" stroke-width="3"/>
<circle cx="404" cy="617" r="10.5" fill="#008E8E"/>
<text x="404" y="619.3" font-size="6.5" fill="#FFF080" text-anchor="middle" font-weight="bold">NetD1_1</text>
<rect x="450.7" y="597.5" width="39" height="39" rx="0" fill="#C0C0C0" stroke="#800080" stroke-width="3"/>
<circle cx="470.2" cy="617" r="10.5" fill="#008E8E"/>
<text x="470.2" y="619.3" font-size="6.5" fill="#FFF080" text-anchor="middle" font-weight="bold">+5V</text>
<circle cx="711" cy="495.8" r="12.8" fill="#C0C0C0" stroke="#800080" stroke-width="2.5"/>
<circle cx="711" cy="495.8" r="5" fill="#8B6508"/>
<text x="711" y="497.6" font-size="5" fill="#FFF080" text-anchor="middle" font-weight="bold">GND</text>
<circle cx="717" cy="582" r="12.8" fill="#C0C0C0" stroke="#800080" stroke-width="2.5"/>
<circle cx="717" cy="582" r="5" fill="#8B6508"/>
<text x="717" y="583.8" font-size="5" fill="#FFF080" text-anchor="middle" font-weight="bold">DTR</text>
<circle cx="907.8" cy="538.8" r="12.8" fill="#C0C0C0" stroke="#800080" stroke-width="2.5"/>
<circle cx="907.8" cy="538.8" r="5" fill="#8B6508"/>
<text x="907.8" y="540.6" font-size="5" fill="#FFF080" text-anchor="middle" font-weight="bold">+5V</text>
<circle cx="907.8" cy="592" r="12.8" fill="#C0C0C0" stroke="#800080" stroke-width="2.5"/>
<circle cx="907.8" cy="592" r="5" fill="#8B6508"/>
<text x="907.8" y="593.8" font-size="5" fill="#FFF080" text-anchor="middle" font-weight="bold">KLINE</text>
<circle cx="1006" cy="550.8" r="12.2" fill="#C0C0C0" stroke="#800080" stroke-width="2.5"/>
<circle cx="1006" cy="550.8" r="5" fill="#8B6508"/>
<text x="1006" y="552.6" font-size="5" fill="#FFF080" text-anchor="middle" font-weight="bold">NRTS</text>
<polyline points="1088.8,506.2 1088.8,522" fill="none" stroke="#808000" stroke-width="4" stroke-linecap="round" stroke-linejoin="round"/>
<polyline points="1127.2,506.2 1127.2,522" fill="none" stroke="#808000" stroke-width="4" stroke-linecap="round" stroke-linejoin="round"/>
<polygon points="955.9,590.7 972.1,590.7 980.3,598.9 980.3,615.1 972.1,623.3 955.9,623.3 947.7,615.1 947.7,598.9" fill="#C0C0C0" stroke="#800080" stroke-width="2.5" stroke-linejoin="round"/>
<circle cx="964" cy="607" r="8.5" fill="#008E8E"/>
<text x="964" y="608.6" font-size="4.5" fill="#FFF080" text-anchor="middle" font-weight="bold">NetD1_2</text>
<polygon points="924.6,622.5 940.9,622.5 949.1,630.6 949.1,646.9 940.9,655.1 924.6,655.1 916.5,646.9 916.5,630.6" fill="#C0C0C0" stroke="#800080" stroke-width="2.5" stroke-linejoin="round"/>
<circle cx="932.8" cy="638.8" r="8.5" fill="#008E8E"/>
<text x="932.8" y="640.4" font-size="4.5" fill="#FFF080" text-anchor="middle" font-weight="bold">NRTS</text>
<polygon points="987.1,622.5 1003.4,622.5 1011.5,630.6 1011.5,646.9 1003.4,655.1 987.1,655.1 978.9,646.9 978.9,630.6" fill="#C0C0C0" stroke="#800080" stroke-width="2.5" stroke-linejoin="round"/>
<circle cx="995.2" cy="638.8" r="8.5" fill="#008E8E"/>
<text x="995.2" y="640.4" font-size="4.5" fill="#FFF080" text-anchor="middle" font-weight="bold">GND</text>
<rect x="385" y="660.5" width="38" height="38" rx="11" fill="#C0C0C0" stroke="#800080" stroke-width="3"/>
<circle cx="404" cy="679.5" r="10.5" fill="#008E8E"/>
<text x="404" y="681.8" font-size="6.5" fill="#FFF080" text-anchor="middle" font-weight="bold">NetD1_1</text>
<rect x="446.5" y="660" width="39" height="39" rx="0" fill="#C0C0C0" stroke="#800080" stroke-width="3"/>
<circle cx="466" cy="679.5" r="10.5" fill="#008E8E"/>
<text x="466" y="681.8" font-size="6.5" fill="#FFF080" text-anchor="middle" font-weight="bold">+5V</text>
<circle cx="534.8" cy="730.8" r="12.8" fill="#C0C0C0" stroke="#800080" stroke-width="2.5"/>
<circle cx="534.8" cy="730.8" r="5" fill="#8B6508"/>
<text x="534.8" y="732.6" font-size="5" fill="#FFF080" text-anchor="middle" font-weight="bold">NRTS</text>
<text transform="translate(335 724.2) rotate(90) scale(-1 1)" font-family="Liberation Serif,serif" font-size="40" fill="#808000" text-anchor="middle" y="13.2" textLength="61" lengthAdjust="spacingAndGlyphs">1k5</text>
<rect x="547" y="773" width="31.6" height="31.6" rx="9" fill="#C0C0C0" stroke="#800080" stroke-width="2.5"/>
<circle cx="562.8" cy="788.8" r="8.5" fill="#008E8E"/>
<text x="562.8" y="790.4" font-size="4.5" fill="#FFF080" text-anchor="middle" font-weight="bold">GND</text>
<rect x="610.2" y="773" width="31.6" height="31.6" rx="9" fill="#C0C0C0" stroke="#800080" stroke-width="2.5"/>
<circle cx="626" cy="788.8" r="8.5" fill="#008E8E"/>
<text x="626" y="790.4" font-size="4.5" fill="#FFF080" text-anchor="middle" font-weight="bold">+5V</text>
<circle cx="779" cy="660.8" r="12.8" fill="#C0C0C0" stroke="#800080" stroke-width="2.5"/>
<circle cx="779" cy="660.8" r="5" fill="#8B6508"/>
<text x="779" y="662.6" font-size="5" fill="#FFF080" text-anchor="middle" font-weight="bold">8Mhz-1</text>
<circle cx="681" cy="753" r="12.8" fill="#C0C0C0" stroke="#800080" stroke-width="2.5"/>
<circle cx="681" cy="753" r="5" fill="#8B6508"/>
<text x="681" y="754.8" font-size="5" fill="#FFF080" text-anchor="middle" font-weight="bold">GND</text>
<rect x="740.7" y="742.2" width="39" height="38" rx="11" fill="#C0C0C0" stroke="#800080" stroke-width="3"/>
<circle cx="760.2" cy="761.2" r="9.5" fill="#008E8E"/>
<text x="760.2" y="763.5" font-size="6.5" fill="#FFF080" text-anchor="middle" font-weight="bold">8Mhz-1</text>
<rect x="879" y="742.2" width="39" height="38" rx="11" fill="#C0C0C0" stroke="#800080" stroke-width="3"/>
<circle cx="898.5" cy="761.2" r="9.5" fill="#008E8E"/>
<text x="898.5" y="763.5" font-size="6.5" fill="#FFF080" text-anchor="middle" font-weight="bold">8Mhz-2</text>
<circle cx="1045.2" cy="770" r="12.2" fill="#C0C0C0" stroke="#800080" stroke-width="2.5"/>
<circle cx="1045.2" cy="770" r="5" fill="#8B6508"/>
<text x="1045.2" y="771.8" font-size="5" fill="#FFF080" text-anchor="middle" font-weight="bold">GND</text>
</g>
<g id="L-yellow">
<polyline points="313.5,194.5 563.5,194.5 563.5,257.5 313.5,257.5 313.5,194.5" fill="none" stroke="#FFFF00" stroke-width="5" stroke-linecap="square" stroke-linejoin="round"/>
<polyline points="652,194.5 964,194.5 964,257.5 652,257.5 652,194.5" fill="none" stroke="#FFFF00" stroke-width="5" stroke-linecap="square" stroke-linejoin="round"/>
<path d="M682.0 362.0H807.0V371.2A7 7 0 0 0 807.0 386.2V395.0H682.0Z" fill="none" stroke="#FFFF00" stroke-width="1.5"/>
<polyline points="1140.2,283 1202,283 1202,782.5 1140.2,782.5 1140.2,283" fill="none" stroke="#FFFF00" stroke-width="5" stroke-linecap="square" stroke-linejoin="round"/>
<text transform="translate(1023.8 233.5)" font-family="Liberation Serif,serif" font-size="40" fill="#FFFF00" text-anchor="middle" y="13.2" textLength="45" lengthAdjust="spacingAndGlyphs">0.1</text>
<text transform="translate(981.5 366.2)" font-family="Liberation Serif,serif" font-size="40" fill="#FFFF00" text-anchor="middle" y="13.2" textLength="64.5" lengthAdjust="spacingAndGlyphs">2k2</text>
<text transform="translate(1064.2 353.8) rotate(-90)" font-family="Liberation Serif,serif" font-size="38" fill="#FFFF00" text-anchor="middle" y="12.5" textLength="58" lengthAdjust="spacingAndGlyphs">120</text>
<text transform="translate(1105.5 417)" font-family="Liberation Serif,serif" font-size="40" fill="#FFFF00" text-anchor="middle" y="13.2" textLength="45" lengthAdjust="spacingAndGlyphs">0.1</text>
<circle cx="516.5" cy="574.5" r="5.5" fill="#FFFF00"/>
<text transform="translate(668.5 538.8)" font-family="Liberation Serif,serif" font-size="40" fill="#FFFF00" text-anchor="middle" y="13.2" textLength="63" lengthAdjust="spacingAndGlyphs">2k2</text>
<text transform="translate(871 600)" font-family="Liberation Serif,serif" font-size="40" fill="#FFFF00" text-anchor="middle" y="13.2" textLength="63" lengthAdjust="spacingAndGlyphs">22p</text>
<text transform="translate(1051.8 489.5)" font-family="Liberation Serif,serif" font-size="40" fill="#FFFF00" text-anchor="middle" y="13.2" textLength="45" lengthAdjust="spacingAndGlyphs">0.1</text>
<text transform="translate(1072.2 548.2)" font-family="Liberation Serif,serif" font-size="40" fill="#FFFF00" text-anchor="middle" y="13.2" textLength="64.5" lengthAdjust="spacingAndGlyphs">2k2</text>
<polyline points="909,616.2 940.2,583.2 990.2,583.2 1020.8,613.8 1020.8,664.5 909,664.5 909,616.2" fill="none" stroke="#FFFF00" stroke-width="5" stroke-linecap="square" stroke-linejoin="round"/>
<text transform="translate(419.2 739.5)" font-family="Liberation Serif,serif" font-size="40" fill="#FFFF00" text-anchor="middle" y="13.2" textLength="62.5" lengthAdjust="spacingAndGlyphs">1k5</text>
<polyline points="532.5,758.5 657,758.5 657,820 532.5,820 532.5,758.5" fill="none" stroke="#FFFF00" stroke-width="5" stroke-linecap="square" stroke-linejoin="round"/>
<text transform="translate(720.2 689.5)" font-family="Liberation Serif,serif" font-size="40" fill="#FFFF00" text-anchor="middle" y="13.2" textLength="45.5" lengthAdjust="spacingAndGlyphs">0.1</text>
<text transform="translate(961 685.8)" font-family="DejaVu Sans,sans-serif" font-size="36" fill="#FFFF00" text-anchor="middle" y="11.9" textLength="104" lengthAdjust="spacingAndGlyphs" font-weight="200">BS170</text>
<text transform="translate(1095 723) rotate(90)" font-family="Liberation Serif,serif" font-size="40" fill="#FFFF00" text-anchor="middle" y="13.2" textLength="46.5" lengthAdjust="spacingAndGlyphs">0.1</text>
</g>
<g id="L-text">
</g>
<g id="L-hud">
<rect x="926" y="773" width="310" height="156" fill="#000" fill-opacity="0.40"/>
<g font-family="Liberation Sans,sans-serif" font-weight="bold"><text x="930" y="802" font-size="22.5" fill="#E6CC4E" textLength="97" lengthAdjust="spacingAndGlyphs">x:101.854</text><text x="1044" y="802" font-size="22.5" fill="#E6CC4E" textLength="155" lengthAdjust="spacingAndGlyphs">dx:101.854 mm</text><text x="930" y="830" font-size="22.5" fill="#E6CC4E" textLength="97" lengthAdjust="spacingAndGlyphs">y:100.203</text><text x="1044" y="830" font-size="22.5" fill="#E6CC4E" textLength="155" lengthAdjust="spacingAndGlyphs">dy:100.203 mm</text><text x="930.5" y="849.5" font-size="12.5" fill="#E6CC4E" textLength="221" lengthAdjust="spacingAndGlyphs">Snap: 0.127mm Electrical: 0.203mm</text><text x="930" y="867.5" font-size="14" fill="#fff" xml:space="preserve" textLength="217" lengthAdjust="spacingAndGlyphs">Shift + H  Toggle Heads Up Display</text><text x="930" y="885.5" font-size="14" fill="#fff" xml:space="preserve" textLength="225" lengthAdjust="spacingAndGlyphs">Shift + G  Toggle Heads Up Tracking</text><text x="930" y="903.5" font-size="14" fill="#fff" xml:space="preserve" textLength="295" lengthAdjust="spacingAndGlyphs">Shift + D  Toggle Heads Up Delta Origin Display</text><text x="930" y="921.5" font-size="14" fill="#fff" xml:space="preserve" textLength="225" lengthAdjust="spacingAndGlyphs">Shift + M Toggle Board Insight Lens</text></g>
</g>
</svg>
<!-- ===== Scrollbars ===== -->
<div class="abs sb" style="left:1236px;top:108px;width:16px;height:821px"></div>
<div class="abs sbb" style="left:1236px;top:108px;width:15px"><svg width="14" height="14" viewBox="0 0 14 14"><path d="M3.500 9l3.500-3.500L10.500 9" stroke="#4D6185" stroke-width="2" fill="none"/></svg></div>
<div class="abs sbb" style="left:1236px;top:861px;height:15px;width:15px"><svg width="14" height="13" viewBox="0 0 14 13"><path d="M4 4h6M4 6h6M4 8h6M4 10h6" stroke="#8CA4E0" stroke-width="1"/></svg></div>
<div class="abs sbb" style="left:1236px;top:913px;width:15px"><svg width="14" height="14" viewBox="0 0 14 14"><path d="M3.500 5.500l3.500 3.500 3.500-3.500" stroke="#4D6185" stroke-width="2" fill="none"/></svg></div>
<div class="abs sbh" style="left:284px;top:929px;width:952px;height:17px"></div>
<div class="abs sbb" style="left:285px;top:930px;height:15px"><svg width="14" height="14" viewBox="0 0 14 14"><path d="M8.500 3.500L5 7l3.500 3.500" stroke="#4D6185" stroke-width="2" fill="none"/></svg></div>
<div class="abs sbb" style="left:334px;top:930px;width:15px;height:15px"><svg width="13" height="14" viewBox="0 0 13 14"><path d="M3.500 4v6M5.500 4v6M7.500 4v6M9.500 4v6" stroke="#8CA4E0" stroke-width="1"/></svg></div>
<div class="abs sbb" style="left:1219px;top:930px;width:15px;height:15px"><svg width="14" height="14" viewBox="0 0 14 14"><path d="M5.500 3.500L9 7l-3.500 3.500" stroke="#4D6185" stroke-width="2" fill="none"/></svg></div>
<div class="abs" style="left:1236px;top:929px;width:18px;height:18px;background:#ECE9D8"></div>

<!-- ===== Right dock tabs ===== -->
<div class="abs vtab" style="top:80px;height:54px"></div>
<div class="abs vtab" style="top:136px;height:54px"></div>
<div class="abs vtab" style="top:193px;height:50px"></div>

<!-- ===== Layer tabs ===== -->
<div class="abs" style="left:284px;top:947px;width:996px;height:19px;background:#ECE9D8"></div>
<div class="abs" style="left:287px;top:949px;width:46px;height:14px;border:1px solid #7A8A9A;background:#ECE9D8"></div>
<div class="abs" style="left:288px;top:950px;width:25px;height:12px;background:#FF0000"></div>
<svg class="abs" style="left:338px;top:946px" width="720" height="20" viewBox="0 0 720 20">
  <g fill="#fff" stroke="#000" stroke-width="1">
   <path d="M94 2h83l-3 15h-83z"/><path d="M181 2h86l-3 15h-86z"/><path d="M271 2h92l-3 15h-92z"/><path d="M367 2h91l-3 15h-91z"/><path d="M462 2h80l-3 15h-80z"/><path d="M546 2h90l-3 15h-90z"/><path d="M640 2h70l-3 15h-70z"/>
  </g>
  <path d="M0 1.500l6 16h83l4-16" fill="#ECE9D8" stroke="#000" stroke-width="1.200"/>
  <path d="M6 18.500h704" stroke="#000" stroke-width="1.500"/>
  <rect x="0" y="0" width="720" height="2.500" fill="#ECE9D8"/>
</svg>
<svg class="abs" style="left:1092px;top:947px" width="60" height="19" viewBox="0 0 60 19"><rect x="2.500" y="3.500" width="11" height="11" fill="#585858" stroke="#282828"/><path d="M10 5.500v7l-5-3.500z" fill="#fff"/><rect x="13.500" y="3.500" width="11" height="11" fill="#585858" stroke="#282828"/><path d="M17 5.500v7l5-3.500z" fill="#fff"/>
 <circle cx="35" cy="6" r="2.500" fill="#FFF060" stroke="#B8A020" stroke-width=".8"/><circle cx="35" cy="13" r="2.500" fill="#FFF060" stroke="#B8A020" stroke-width=".8"/><path d="M40 5l5 4.500-5 4.500z" fill="#3C6CC0"/><path d="M47 5h10l-4 4.500v4.500h-2v-4.500z" fill="#fff" stroke="#384868" stroke-width="1"/></svg>
<div class="abs" style="left:1153px;top:947px;width:63px;height:19px;border:1px solid #D4D0C0;background:#F1EEE0;font-size:11.5px;line-height:17px;text-align:center;color:#808080"></div>
<div class="abs" style="left:1218px;top:947px;width:34px;height:19px;border:1px solid #D4D0C0;background:#F1EEE0;font-size:11.5px;line-height:17px;text-align:center;color:#808080"></div>

<!-- ===== Status bar ===== -->
<div class="abs" style="left:0;top:966px;width:1280px;height:24px;background:#ECE9D8;border-top:1px solid #C5C2B2"></div>
<div class="abs" style="left:325px;top:971px;width:1px;height:16px;background:#ACA899"></div>
<div class="abs stb" style="left:961px;width:48px"></div>
<div class="abs stb" style="left:1009px;width:90px"></div>
<div class="abs stb" style="left:1099px;width:43px"></div>
<div class="abs stb" style="left:1142px;width:69px"></div>
<div class="abs stb" style="left:1211px;width:43px"></div>
<div class="abs stb" style="left:1258px;width:19px"></div>
<div class="abs" style="left:0;top:990px;width:1280px;height:4px;background:linear-gradient(#3A80F0,#2468E0)"></div>
<svg class="abs" style="left:0;top:0;pointer-events:none;will-change:transform" width="1280" height="994" viewBox="0 0 1280 994" font-family="Liberation Sans,sans-serif">
<defs><clipPath id="ctc"><rect x="68" y="222" width="161" height="16"/></clipPath><clipPath id="ctd"><rect x="250" y="946" width="30" height="20"/></clipPath></defs>
<text x="22" y="18.3" font-size="14.5" font-weight="bold" fill="#fff" textLength="1150" lengthAdjust="spacingAndGlyphs" xml:space="preserve" style="text-shadow:1px 1px 0 #10307A">Altium Designer 6.7 - G:\D-PARTICIJA\DOCUMENTS AND SETTINGS\crystal\MY DOCUMENTS\SA DESKTOPA\11.03.2009\K+CAN CHINA OBD OK.PCBDOC - Free Documents. Licensed to ALTIUM</text>
<text x="30.5" y="43" font-size="11.5" fill="#000" textLength="18.5" lengthAdjust="spacingAndGlyphs" xml:space="preserve">DXP</text>
<rect x="37" y="44.0" width="6" height="1" fill="#000"/>
<text x="61.8" y="43" font-size="11.5" fill="#000" textLength="15.5" lengthAdjust="spacingAndGlyphs" xml:space="preserve">File</text>
<rect x="62" y="44.0" width="5" height="1" fill="#000"/>
<text x="93.5" y="43" font-size="11.5" fill="#000" textLength="17.5" lengthAdjust="spacingAndGlyphs" xml:space="preserve">Edit</text>
<rect x="94" y="44.0" width="5" height="1" fill="#000"/>
<text x="127.8" y="43" font-size="11.5" fill="#000" textLength="21.5" lengthAdjust="spacingAndGlyphs" xml:space="preserve">View</text>
<rect x="128" y="44.0" width="6" height="1" fill="#000"/>
<text x="165.5" y="43" font-size="11.5" fill="#000" textLength="33.5" lengthAdjust="spacingAndGlyphs" xml:space="preserve">Project</text>
<rect x="188" y="44.0" width="5" height="1" fill="#000"/>
<text x="215.5" y="43" font-size="11.5" fill="#000" textLength="24.5" lengthAdjust="spacingAndGlyphs" xml:space="preserve">Place</text>
<rect x="216" y="44.0" width="5" height="1" fill="#000"/>
<text x="256.8" y="43" font-size="11.5" fill="#000" textLength="31.3" lengthAdjust="spacingAndGlyphs" xml:space="preserve">Design</text>
<rect x="257" y="44.0" width="6" height="1" fill="#000"/>
<text x="304.5" y="43" font-size="11.5" fill="#000" textLength="25" lengthAdjust="spacingAndGlyphs" xml:space="preserve">Tools</text>
<rect x="305" y="44.0" width="5" height="1" fill="#000"/>
<text x="345.8" y="43" font-size="11.5" fill="#000" textLength="54.3" lengthAdjust="spacingAndGlyphs" xml:space="preserve">Auto Route</text>
<rect x="346" y="44.0" width="6" height="1" fill="#000"/>
<text x="416.8" y="43" font-size="11.5" fill="#000" textLength="37.3" lengthAdjust="spacingAndGlyphs" xml:space="preserve">Reports</text>
<rect x="417" y="44.0" width="6" height="1" fill="#000"/>
<text x="470.8" y="43" font-size="11.5" fill="#000" textLength="37.3" lengthAdjust="spacingAndGlyphs" xml:space="preserve">Window</text>
<rect x="471" y="44.0" width="9" height="1" fill="#000"/>
<text x="524.5" y="43" font-size="11.5" fill="#000" textLength="20.5" lengthAdjust="spacingAndGlyphs" xml:space="preserve">Help</text>
<rect x="525" y="44.0" width="6" height="1" fill="#000"/>
<text x="996" y="43" font-size="11.5" fill="#000" textLength="184" lengthAdjust="spacingAndGlyphs" xml:space="preserve">G:\D-PARTICIJA\DOCUMENTS AND SE</text>
<text x="1063.8" y="70" font-size="11.5" fill="#000" textLength="19" lengthAdjust="spacingAndGlyphs" xml:space="preserve">(All)</text>
<text x="2" y="90" font-size="11.5" font-weight="bold" fill="#DDE4F8" textLength="45.5" lengthAdjust="spacingAndGlyphs" xml:space="preserve">Projects</text>
<text x="15" y="119.3" font-size="11.5" fill="#000" textLength="102.5" lengthAdjust="spacingAndGlyphs" xml:space="preserve">Workspace1.DsnWrk</text>
<text x="211.3" y="119.3" font-size="11.5" fill="#000" textLength="55" lengthAdjust="spacingAndGlyphs" xml:space="preserve">Workspace</text>
<text x="222.5" y="147" font-size="11.5" fill="#000" textLength="33" lengthAdjust="spacingAndGlyphs" xml:space="preserve">Project</text>
<text x="26" y="174" font-size="11.5" fill="#000" textLength="42" lengthAdjust="spacingAndGlyphs" xml:space="preserve">File View</text>
<text x="96" y="174" font-size="11.5" fill="#000" textLength="73.5" lengthAdjust="spacingAndGlyphs" xml:space="preserve">Structure Editor</text>
<text x="47.5" y="203" font-size="11.5" font-weight="bold" fill="#fff" textLength="91.5" lengthAdjust="spacingAndGlyphs" xml:space="preserve">Free Documents</text>
<text x="59.5" y="219" font-size="11.5" fill="#000" textLength="90.5" lengthAdjust="spacingAndGlyphs" xml:space="preserve">Source Documents</text>
<text x="71" y="235" font-size="11.5" fill="#fff" textLength="162" lengthAdjust="spacingAndGlyphs" xml:space="preserve" clip-path="url(#ctc)">K+CAN CHINA OBD OK.PCBDOC</text>
<text x="311" y="97" font-size="11.5" fill="#000" textLength="157" lengthAdjust="spacingAndGlyphs" xml:space="preserve">K+CAN CHINA OBD OK.PCBDOC</text>
<text x="43" y="960" font-size="11.5" fill="#000" textLength="21.5" lengthAdjust="spacingAndGlyphs" xml:space="preserve">Files</text>
<text x="82.5" y="960" font-size="11.5" font-weight="bold" fill="#fff" textLength="47" lengthAdjust="spacingAndGlyphs" xml:space="preserve">Projects</text>
<text x="149.5" y="960" font-size="11.5" fill="#000" textLength="46.5" lengthAdjust="spacingAndGlyphs" xml:space="preserve">Navigator</text>
<text x="217.5" y="960" font-size="11.5" fill="#000" textLength="18.5" lengthAdjust="spacingAndGlyphs" xml:space="preserve">PCB</text>
<text x="256" y="960" font-size="11.5" fill="#000" textLength="27" lengthAdjust="spacingAndGlyphs" xml:space="preserve" clip-path="url(#ctd)">PCB L</text>
<text x="4.8" y="982" font-size="11.5" fill="#000" textLength="133.3" lengthAdjust="spacingAndGlyphs" xml:space="preserve">X:101.854mm Y:100.203mm</text>
<text x="150.8" y="982" font-size="11.5" fill="#000" textLength="64.2" lengthAdjust="spacingAndGlyphs" xml:space="preserve">Grid:0.127mm</text>
<text x="316" y="960.5" font-size="11.5" fill="#808080" textLength="12.5" lengthAdjust="spacingAndGlyphs" xml:space="preserve">LS</text>
<text x="362" y="960" font-size="11.5" font-weight="bold" fill="#000" textLength="56" lengthAdjust="spacingAndGlyphs" xml:space="preserve">Top Layer</text>
<rect x="347.5" y="950.5" width="9" height="9" fill="#FF0000"/>
<text x="447.5" y="960" font-size="11.5" fill="#000" textLength="61.5" lengthAdjust="spacingAndGlyphs" xml:space="preserve">Bottom Layer</text>
<rect x="433.0" y="950.5" width="9" height="9" fill="#0000FF"/>
<text x="534.5" y="960" font-size="11.5" fill="#000" textLength="62.5" lengthAdjust="spacingAndGlyphs" xml:space="preserve">Mechanical 1</text>
<rect x="520.0" y="950.5" width="9" height="9" fill="#FF00FF"/>
<text x="623" y="960" font-size="11.5" fill="#000" textLength="71" lengthAdjust="spacingAndGlyphs" xml:space="preserve">Mechanical 13</text>
<rect x="608.5" y="950.5" width="9" height="9" fill="#FF00FF"/>
<text x="718.5" y="960" font-size="11.5" fill="#000" textLength="70" lengthAdjust="spacingAndGlyphs" xml:space="preserve">Mechanical 15</text>
<rect x="704.0" y="950.5" width="9" height="9" fill="#008000"/>
<text x="813.5" y="960" font-size="11.5" fill="#000" textLength="57.5" lengthAdjust="spacingAndGlyphs" xml:space="preserve">Top Overlay</text>
<rect x="799.0" y="950.5" width="9" height="9" fill="#FFFF00"/>
<text x="896.5" y="960" font-size="11.5" fill="#000" textLength="71.5" lengthAdjust="spacingAndGlyphs" xml:space="preserve">Bottom Overlay</text>
<rect x="882.0" y="950.5" width="9" height="9" fill="#808000"/>
<text x="993.5" y="960" font-size="11.5" fill="#000" textLength="49" lengthAdjust="spacingAndGlyphs" xml:space="preserve">Top Paste</text>
<rect x="979.0" y="950.5" width="9" height="9" fill="#708090"/>
<text x="1157.5" y="960.5" font-size="11.5" fill="#808080" textLength="52.5" lengthAdjust="spacingAndGlyphs" xml:space="preserve">Mask Level</text>
<text x="1222.5" y="960.5" font-size="11.5" fill="#808080" textLength="24" lengthAdjust="spacingAndGlyphs" xml:space="preserve">Clear</text>
<text x="968" y="982" font-size="11.5" fill="#4A4A3A" textLength="34.5" lengthAdjust="spacingAndGlyphs" xml:space="preserve">System</text>
<rect x="968" y="983.5" width="6" height="1" fill="#4A4A3A"/>
<text x="1016" y="982" font-size="11.5" fill="#4A4A3A" textLength="76.5" lengthAdjust="spacingAndGlyphs" xml:space="preserve">Design Compiler</text>
<rect x="1016" y="983.5" width="7" height="1" fill="#4A4A3A"/>
<text x="1109" y="982" font-size="11.5" fill="#4A4A3A" textLength="22" lengthAdjust="spacingAndGlyphs" xml:space="preserve">Help</text>
<rect x="1109" y="983.5" width="6" height="1" fill="#4A4A3A"/>
<text x="1149" y="982" font-size="11.5" fill="#4A4A3A" textLength="54.5" lengthAdjust="spacingAndGlyphs" xml:space="preserve">Instruments</text>
<rect x="1149" y="983.5" width="2" height="1" fill="#4A4A3A"/>
<text x="1221.5" y="982" font-size="11.5" fill="#4A4A3A" textLength="19.5" lengthAdjust="spacingAndGlyphs" xml:space="preserve">PCB</text>
<rect x="1221.5" y="983.5" width="5.5" height="1" fill="#4A4A3A"/>
<text x="1261.5" y="982" font-size="11.5" fill="#4A4A3A" textLength="12.5" lengthAdjust="spacingAndGlyphs" xml:space="preserve">&gt;&gt;</text>
<text transform="translate(1261.5 105) rotate(90)" x="-22.5" y="0" font-size="11.5" fill="#5A5849" textLength="45" lengthAdjust="spacingAndGlyphs">Favorites</text>
<text transform="translate(1261.5 162.5) rotate(90)" x="-22.35" y="0" font-size="11.5" fill="#5A5849" textLength="44.7" lengthAdjust="spacingAndGlyphs">Clipboard</text>
<text transform="translate(1261.5 216.5) rotate(90)" x="-20.0" y="0" font-size="11.5" fill="#5A5849" textLength="40" lengthAdjust="spacingAndGlyphs">Libraries</text>
</svg>
</body>
</html>
